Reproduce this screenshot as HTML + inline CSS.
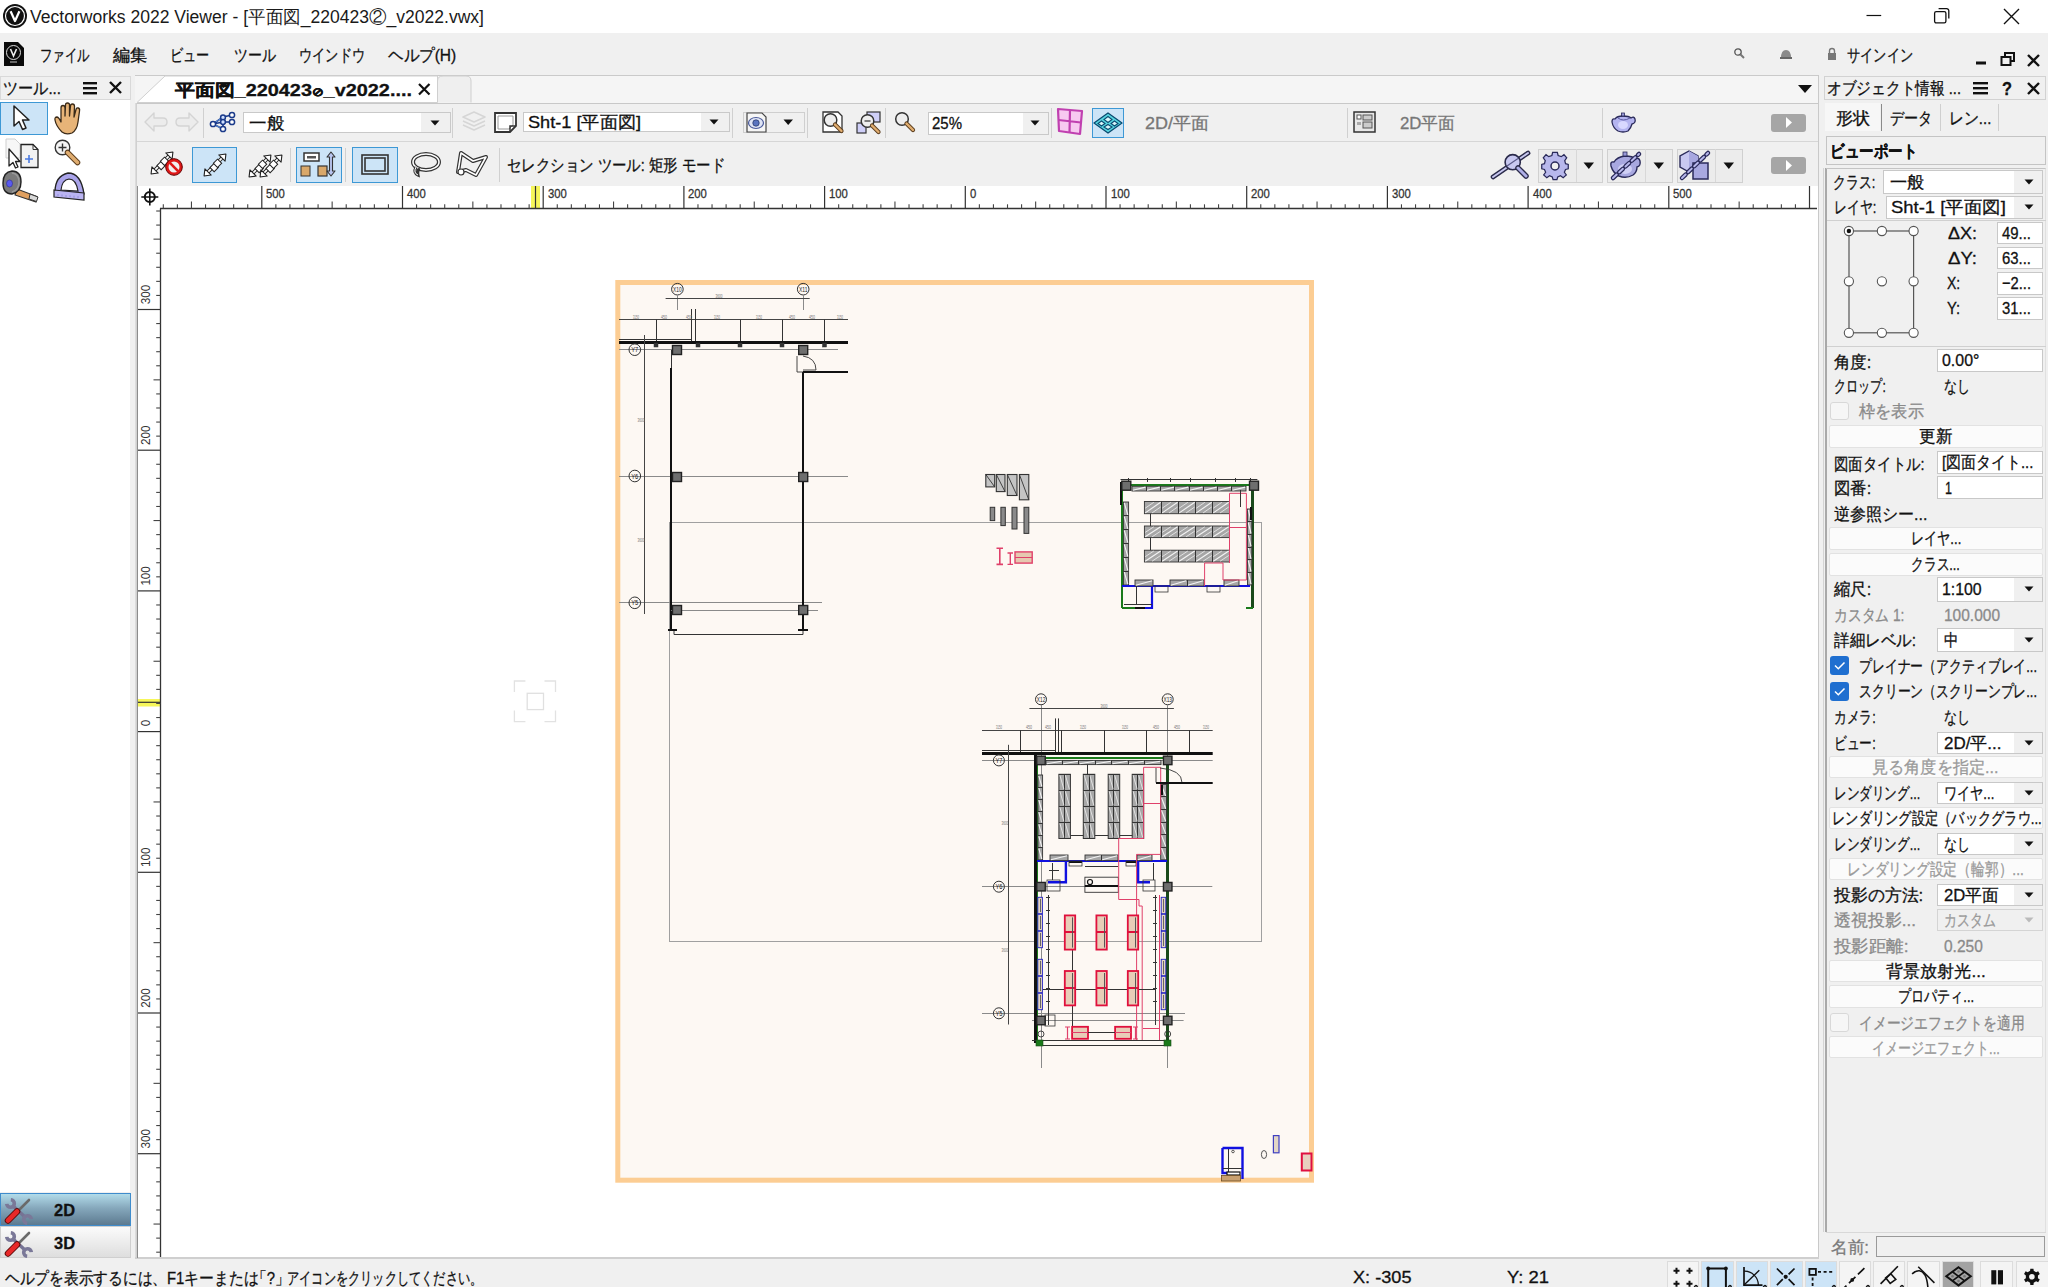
<!DOCTYPE html>
<html lang="ja"><head><meta charset="utf-8"><title>Vectorworks 2022 Viewer</title><style>*{margin:0;padding:0;box-sizing:border-box}
html,body{width:2048px;height:1287px;overflow:hidden;background:#f0f0f0;font-family:"Liberation Sans", sans-serif;position:relative}
.t{position:absolute;white-space:nowrap;line-height:1;transform-origin:0 50%;-webkit-text-stroke:0.3px currentColor}
svg{position:absolute;overflow:visible}
svg text{font-family:"Liberation Sans",sans-serif}</style></head><body>
<div style="position:absolute;left:0px;top:0px;width:2048px;height:33px;background:#fff"></div>
<svg style="left:2px;top:3px;" width="26" height="26" viewBox="0 0 26 26"><circle cx="13" cy="13" r="12" fill="#111"/><circle cx="13" cy="13" r="9.5" fill="none" stroke="#fff" stroke-width="1.2"/><path d="M8.6 8.2 L13 18 L17.4 8.2" fill="none" stroke="#fff" stroke-width="2.2" stroke-linejoin="round"/></svg>
<svg class="st" style="left:30px;top:-1.0px" width="458" height="36"><text x="0" y="24.24" font-size="18" font-weight="400" fill="#1a1a1a" textLength="454" lengthAdjust="spacingAndGlyphs">Vectorworks 2022 Viewer - [平面図_220423②_v2022.vwx]</text></svg>
<svg style="left:1866px;top:8px;" width="20" height="20" viewBox="0 0 20 20"><line x1="0.5" y1="7.5" x2="15.2" y2="7.5" stroke="#111" stroke-width="1.2"/></svg>
<svg style="left:1931px;top:5px;" width="22" height="22" viewBox="0 0 22 22"><rect x="3.6" y="6.6" width="11.3" height="11.3" rx="1.6" fill="none" stroke="#111" stroke-width="1.3"/><path d="M7.6 3.6 H15.6 a2.2 2.2 0 0 1 2.2 2.2 V13.6" fill="none" stroke="#111" stroke-width="1.3"/></svg>
<svg style="left:2001px;top:6px;" width="22" height="22" viewBox="0 0 22 22"><path d="M3 3 L18 18 M18 3 L3 18" stroke="#111" stroke-width="1.4"/></svg>
<div style="position:absolute;left:0px;top:33px;width:2048px;height:42px;background:#f0f0f0"></div>
<svg style="left:3px;top:41px;" width="22" height="26" viewBox="0 0 22 26"><path d="M1 1 H15 L21 7 V25 H1 Z" fill="#0a0a0a"/><circle cx="10.5" cy="11.5" r="7" fill="none" stroke="#ddd" stroke-width="1"/><path d="M7.5 8 L10.5 15 L13.5 8" fill="none" stroke="#eee" stroke-width="1.6"/><rect x="7" y="20" width="7" height="2" fill="#666"/></svg>
<svg class="st" style="left:39.5px;top:37.5px" width="54" height="34"><text x="0" y="22.89" font-size="17" font-weight="400" fill="#111" stroke="#111" stroke-width="0.3" textLength="49.5" lengthAdjust="spacingAndGlyphs">ファイル</text></svg>
<svg class="st" style="left:113px;top:37.5px" width="38" height="34"><text x="0" y="22.89" font-size="17" font-weight="400" fill="#111" stroke="#111" stroke-width="0.3" textLength="34.3" lengthAdjust="spacingAndGlyphs">編集</text></svg>
<svg class="st" style="left:170px;top:37.5px" width="44" height="34"><text x="0" y="22.89" font-size="17" font-weight="400" fill="#111" stroke="#111" stroke-width="0.3" textLength="39.5" lengthAdjust="spacingAndGlyphs">ビュー</text></svg>
<svg class="st" style="left:233.5px;top:37.5px" width="46" height="34"><text x="0" y="22.89" font-size="17" font-weight="400" fill="#111" stroke="#111" stroke-width="0.3" textLength="42" lengthAdjust="spacingAndGlyphs">ツール</text></svg>
<svg class="st" style="left:298.5px;top:37.5px" width="70" height="34"><text x="0" y="22.89" font-size="17" font-weight="400" fill="#111" stroke="#111" stroke-width="0.3" textLength="66" lengthAdjust="spacingAndGlyphs">ウインドウ</text></svg>
<svg class="st" style="left:387.5px;top:37.5px" width="72" height="34"><text x="0" y="22.89" font-size="17" font-weight="400" fill="#111" stroke="#111" stroke-width="0.3" textLength="68.3" lengthAdjust="spacingAndGlyphs">ヘルプ(H)</text></svg>
<svg style="left:1733px;top:47px;" width="14" height="14" viewBox="0 0 14 14"><circle cx="5" cy="5" r="3.2" fill="none" stroke="#555" stroke-width="1.3"/><line x1="7.3" y1="7.3" x2="11" y2="11" stroke="#777" stroke-width="2"/></svg>
<svg style="left:1779px;top:47px;" width="14" height="14" viewBox="0 0 14 14"><path d="M2 11 Q2 3 7 3 Q12 3 12 11 Z" fill="#8a8a8a"/><rect x="1" y="10" width="12" height="2" fill="#666"/></svg>
<svg style="left:1826px;top:47px;" width="12" height="14" viewBox="0 0 12 14"><rect x="2" y="6" width="8" height="7" fill="#777"/><path d="M3.5 6 V4 a2.5 2.5 0 0 1 5 0 V6" fill="none" stroke="#777" stroke-width="1.4"/></svg>
<svg class="st" style="left:1846.5px;top:37.5px" width="70" height="34"><text x="0" y="22.89" font-size="17" font-weight="400" fill="#111" stroke="#111" stroke-width="0.3" textLength="66" lengthAdjust="spacingAndGlyphs">サインイン</text></svg>
<svg style="left:1975px;top:57px;" width="14" height="10" viewBox="0 0 14 10"><rect x="1" y="4.5" width="10" height="3" fill="#111"/></svg>
<svg style="left:2000px;top:51px;" width="17" height="17" viewBox="0 0 17 17"><rect x="1.5" y="6" width="9" height="8" fill="none" stroke="#111" stroke-width="2"/><path d="M5 6 V2 H14 V10 H10.5" fill="none" stroke="#111" stroke-width="2"/></svg>
<svg style="left:2026px;top:53px;" width="16" height="16" viewBox="0 0 16 16"><path d="M2 2 L13 13 M13 2 L2 13" stroke="#111" stroke-width="2.4"/></svg>
<div style="position:absolute;left:0px;top:75px;width:137px;height:1183px;background:#f0f0f0"></div>
<div style="position:absolute;left:0px;top:76px;width:131px;height:24px;background:#f0f0f0;border:1px solid #d9d9d9"></div>
<svg class="st" style="left:3px;top:71.0px" width="62" height="34"><text x="0" y="22.89" font-size="17" font-weight="400" fill="#111" stroke="#111" stroke-width="0.3" textLength="58" lengthAdjust="spacingAndGlyphs">ツール...</text></svg>
<svg style="left:82px;top:80px;" width="18" height="16" viewBox="0 0 18 16"><rect x="1" y="2" width="14" height="2.4" fill="#111"/><rect x="1" y="7" width="14" height="2.4" fill="#111"/><rect x="1" y="12" width="14" height="2.4" fill="#111"/></svg>
<svg style="left:108px;top:80px;" width="16" height="16" viewBox="0 0 16 16"><path d="M2 2 L13 13 M13 2 L2 13" stroke="#111" stroke-width="2.4"/></svg>
<div style="position:absolute;left:0px;top:100px;width:130px;height:1092px;background:#fff"></div>
<div style="position:absolute;left:131px;top:75px;width:6px;height:1183px;background:#f0f0f0"></div>
<div style="position:absolute;left:135px;top:100px;width:1px;height:1158px;background:#dcdcdc"></div>
<div style="position:absolute;left:0px;top:102px;width:48px;height:33px;background:#cce4f7;border:1px solid #3d98d5"></div>
<svg style="left:10px;top:104px;" width="22" height="30" viewBox="0 0 22 30"><path d="M4 2 L4 22 L9 17.5 L12.5 25.5 L16 24 L12.5 16 L19 16 Z" fill="#fff" stroke="#222" stroke-width="1.5" stroke-linejoin="round"/></svg>
<svg style="left:53px;top:102px;" width="30" height="34" viewBox="0 0 30 34"><path d="M9 30 Q3 24 2 18 Q1.5 15 4 15 Q6 15.5 8 20 L8 6 Q8 3.5 10 3.5 Q12 3.5 12 6 L12 14 L12.5 3 Q12.5 1 14.5 1 Q16.5 1 16.5 3 L16.5 14 L17.5 4 Q17.5 2 19.5 2 Q21.5 2 21.5 4.5 L21 15 L23 7.5 Q23.5 5.5 25.3 6 Q27 6.5 26.5 9 L25 20 Q24 28 19 31 Q13 33 9 30 Z" fill="#e7b478" stroke="#3a2a18" stroke-width="1.3" stroke-linejoin="round"/></svg>
<svg style="left:2px;top:136px;" width="38" height="34" viewBox="0 0 38 34"><path d="M4 3 H13 L18 8 V22 H4 Z" fill="#f7f7f7" stroke="#cfcfcf" stroke-width="1"/><path d="M19 8.5 H31 L36 13.5 V31.5 H19 Z" fill="#f2f2f2" stroke="#222" stroke-width="1.3"/><path d="M31 8.5 V13.5 H36" fill="none" stroke="#222" stroke-width="0.9"/><path d="M27 19 V27 M23 23 H31" stroke="#4a7ae0" stroke-width="1.6"/><path d="M7 13 L7 30 L11 26.5 L13.5 32 L16 31 L13.5 25.5 L18 25.5 Z" fill="#fff" stroke="#222" stroke-width="1.3" stroke-linejoin="round"/></svg>
<svg style="left:52px;top:138px;" width="32" height="30" viewBox="0 0 32 30"><circle cx="10.5" cy="9.5" r="7.3" fill="#f4f4f4" stroke="#333" stroke-width="1.4"/><path d="M10.5 5.5 V13.5 M6.5 9.5 H14.5" stroke="#333" stroke-width="1.4"/><path d="M15.5 14.5 L25.5 24.5" stroke="#5a3c1c" stroke-width="5.5" stroke-linecap="round"/><path d="M15.5 14.5 L25.5 24.5" stroke="#e0ad70" stroke-width="3.5" stroke-linecap="round"/></svg>
<svg style="left:0px;top:168px;" width="42" height="34" viewBox="0 0 42 34"><path d="M17 21 L37 28.5 L36 34 L15 27 Z" fill="#e0a060" stroke="#333" stroke-width="1.1"/><path d="M30 26 L38 29 L36.5 33.5 L29 31 Z" fill="#d8d8d8" stroke="#333" stroke-width="1"/><path d="M3 15 Q3 4 12 3 Q21 3 21 14 Q21 24 12 26 Q3 26 3 15 Z" fill="#7a7a7a" stroke="#222" stroke-width="1.4"/><path d="M12 5 Q19 6 19 14 Q19 22 12 24" fill="none" stroke="#999" stroke-width="1.5"/><ellipse cx="9.5" cy="15.5" rx="3" ry="3.6" fill="#5a5af0" stroke="#2a2a90" stroke-width="0.6"/></svg>
<svg style="left:50px;top:170px;" width="38" height="34" viewBox="0 0 38 34"><path d="M5 22 Q5 6 18 3 Q31 3 34 24 Z" fill="#aaa4ea" stroke="#222" stroke-width="1.3" stroke-linejoin="round"/><path d="M11 20 Q12 10 19 9 Q26 9 28 21 Z" fill="#fff" stroke="#222" stroke-width="1.2"/><path d="M4 20 L34 23 L34 30 L4 27 Z" fill="#bab4f2" stroke="#222" stroke-width="1.2"/><path d="M8 24 V26 M12 24.5 V26.5 M16 25 V27 M20 25.3 V27.3 M24 25.7 V27.7 M28 26 V28" stroke="#8a84d0" stroke-width="0.8"/></svg>
<div style="position:absolute;left:0px;top:1193px;width:130.5px;height:33px;background:linear-gradient(#b2dcea,#86a8bc 45%,#5c7a90);border:1px solid #3f8ccc;border-width:1.5px"></div>
<div style="position:absolute;left:0px;top:1226px;width:130.5px;height:32px;background:linear-gradient(#fbfbfb,#dedede);border:1px solid #cfcfcf"></div>
<svg style="left:1px;top:1194px;" width="36" height="32" viewBox="0 0 36 32"><path d="M11.5 11.5 L24.5 23.5" stroke="#757394" stroke-width="3.4"/><path d="M9.83 5.71 A3.8 3.8 0 1 1 5.71 9.83" fill="none" stroke="#7a7898" stroke-width="3.6"/><path d="M26.17 29.29 A3.8 3.8 0 1 1 30.29 25.17" fill="none" stroke="#7a7898" stroke-width="3.6"/><path d="M28 6 L17 17" stroke="#6a6a6a" stroke-width="2.6" stroke-linecap="round"/><path d="M16 17.5 L7 26.5" stroke="#5a0a0a" stroke-width="6.5" stroke-linecap="round"/><path d="M16 17.5 L7 26.5" stroke="#e82828" stroke-width="4.6" stroke-linecap="round"/></svg>
<svg style="left:1px;top:1227px;" width="36" height="32" viewBox="0 0 36 32"><path d="M11.5 11.5 L24.5 23.5" stroke="#757394" stroke-width="3.4"/><path d="M9.83 5.71 A3.8 3.8 0 1 1 5.71 9.83" fill="none" stroke="#7a7898" stroke-width="3.6"/><path d="M26.17 29.29 A3.8 3.8 0 1 1 30.29 25.17" fill="none" stroke="#7a7898" stroke-width="3.6"/><path d="M28 6 L17 17" stroke="#6a6a6a" stroke-width="2.6" stroke-linecap="round"/><path d="M16 17.5 L7 26.5" stroke="#5a0a0a" stroke-width="6.5" stroke-linecap="round"/><path d="M16 17.5 L7 26.5" stroke="#e82828" stroke-width="4.6" stroke-linecap="round"/></svg>
<svg class="st" style="left:53.5px;top:1193.0px" width="25" height="34"><text x="0" y="22.89" font-size="17" font-weight="700" fill="#111" stroke="#111" stroke-width="0.3" textLength="21" lengthAdjust="spacingAndGlyphs">2D</text></svg>
<svg class="st" style="left:53.5px;top:1226.0px" width="25" height="34"><text x="0" y="22.89" font-size="17" font-weight="700" fill="#111" stroke="#111" stroke-width="0.3" textLength="21" lengthAdjust="spacingAndGlyphs">3D</text></svg>
<div style="position:absolute;left:0px;top:1258px;width:2048px;height:29px;background:#f0f0f0"></div>
<svg class="st" style="left:4.9px;top:1260.5px" width="166" height="34"><text x="0" y="22.89" font-size="17" font-weight="400" fill="#111" stroke="#111" stroke-width="0.3" textLength="162" lengthAdjust="spacingAndGlyphs">ヘルプを表示するには、</text></svg>
<svg class="st" style="left:166.7px;top:1260.5px" width="96" height="34"><text x="0" y="22.89" font-size="17" font-weight="400" fill="#111" stroke="#111" stroke-width="0.3" textLength="91.6" lengthAdjust="spacingAndGlyphs">F1キーまたは</text></svg>
<svg class="st" style="left:252px;top:1260.5px" width="42" height="34"><text x="0" y="22.89" font-size="17" font-weight="400" fill="#111" stroke="#111" stroke-width="0.3" textLength="38" lengthAdjust="spacingAndGlyphs">「?」</text></svg>
<svg class="st" style="left:287px;top:1260.5px" width="199" height="34"><text x="0" y="22.89" font-size="17" font-weight="400" fill="#111" stroke="#111" stroke-width="0.3" textLength="195.3" lengthAdjust="spacingAndGlyphs">アイコンをクリックしてください。</text></svg>
<svg class="st" style="left:1352.5px;top:1260.0px" width="62" height="34"><text x="0" y="22.89" font-size="17" font-weight="400" fill="#111" stroke="#111" stroke-width="0.3" textLength="58.5" lengthAdjust="spacingAndGlyphs">X: -305</text></svg>
<svg class="st" style="left:1507px;top:1260.0px" width="46" height="34"><text x="0" y="22.89" font-size="17" font-weight="400" fill="#111" stroke="#111" stroke-width="0.3" textLength="42" lengthAdjust="spacingAndGlyphs">Y: 21</text></svg>
<div style="position:absolute;left:1666.7px;top:1261px;width:32.5px;height:30px;background:#f4f4f4;border:1px solid #dcdcdc;border-bottom:none"></div>
<svg style="left:1666.7px;top:1261px;" width="33" height="30" viewBox="0 0 33 30"><path d="M6.5 9.8 H12.5 M9.5 6.8 V12.8 M19.5 9.8 H25.5 M22.5 6.8 V12.8 M6.5 22.8 H12.5 M9.5 19.8 V25.8 M19.5 22.8 H25.5 M22.5 19.8 V25.8" stroke="#111" stroke-width="2"/><path d="M26 30 Q27 25 29 24.5 Q31 24.5 30.5 30" fill="none" stroke="#111" stroke-width="1.3"/></svg>
<div style="position:absolute;left:1701px;top:1261px;width:32.5px;height:30px;background:#cce4f7;border:1px solid #dcdcdc;border-bottom:none"></div>
<svg style="left:1701px;top:1261px;" width="33" height="30" viewBox="0 0 33 30"><rect x="7.2" y="7.5" width="17.7" height="20" fill="none" stroke="#111" stroke-width="2"/><circle cx="7.2" cy="7.5" r="1.9" fill="#111"/><circle cx="24.9" cy="7.5" r="1.9" fill="#111"/><path d="M26 30 Q27 25 29 24.5 Q31 24.5 30.5 30" fill="none" stroke="#111" stroke-width="1.3"/></svg>
<div style="position:absolute;left:1735.5px;top:1261px;width:32.5px;height:30px;background:#cce4f7;border:1px solid #dcdcdc;border-bottom:none"></div>
<svg style="left:1735.5px;top:1261px;" width="33" height="30" viewBox="0 0 33 30"><path d="M8 6 V24.1 H26.5" fill="none" stroke="#111" stroke-width="1.7"/><path d="M8 24.1 L23.3 9.3" stroke="#111" stroke-width="1.4"/><path d="M8 10.2 A14 14 0 0 1 22.4 24.1" fill="none" stroke="#111" stroke-width="1.3"/><path d="M26 30 Q27 25 29 24.5 Q31 24.5 30.5 30" fill="none" stroke="#111" stroke-width="1.3"/></svg>
<div style="position:absolute;left:1770px;top:1261px;width:32.5px;height:30px;background:#cce4f7;border:1px solid #dcdcdc;border-bottom:none"></div>
<svg style="left:1770px;top:1261px;" width="33" height="30" viewBox="0 0 33 30"><path d="M6.9 7.5 L12.8 13.4 M18.6 13.4 L24.5 7.5 M12.8 18.2 L6.9 24.1 M18.6 18.2 L24.5 24.1" stroke="#111" stroke-width="1.7"/><circle cx="15.7" cy="15.8" r="2.1" fill="#111"/></svg>
<div style="position:absolute;left:1804.5px;top:1261px;width:32.5px;height:30px;background:#cce4f7;border:1px solid #dcdcdc;border-bottom:none"></div>
<svg style="left:1804.5px;top:1261px;" width="33" height="30" viewBox="0 0 33 30"><rect x="4.4" y="7.9" width="6.5" height="6" fill="none" stroke="#111" stroke-width="1.8"/><path d="M13 10.9 H28" stroke="#111" stroke-width="1.8" stroke-dasharray="3,2.6"/><path d="M7.6 16.5 V31" stroke="#111" stroke-width="1.8" stroke-dasharray="3,2.6"/><path d="M26 30 Q27 25 29 24.5 Q31 24.5 30.5 30" fill="none" stroke="#111" stroke-width="1.3"/></svg>
<div style="position:absolute;left:1838.5px;top:1261px;width:32.5px;height:30px;background:#f4f4f4;border:1px solid #dcdcdc;border-bottom:none"></div>
<svg style="left:1838.5px;top:1261px;" width="33" height="30" viewBox="0 0 33 30"><path d="M25.4 7.2 L4 28" stroke="#111" stroke-width="1.7" stroke-dasharray="9,3.5"/><circle cx="13.2" cy="18.9" r="1.9" fill="#111"/><path d="M26 30 Q27 25 29 24.5 Q31 24.5 30.5 30" fill="none" stroke="#111" stroke-width="1.3"/></svg>
<div style="position:absolute;left:1872.5px;top:1261px;width:32.5px;height:30px;background:#f4f4f4;border:1px solid #dcdcdc;border-bottom:none"></div>
<svg style="left:1872.5px;top:1261px;" width="33" height="30" viewBox="0 0 33 30"><path d="M24.9 5.2 L7.6 22.9" stroke="#111" stroke-width="1.6"/><path d="M12.7 16.8 L17.8 12.8 L22.8 18.4 L17.2 22.4 Z" fill="none" stroke="#111" stroke-width="1.6"/><path d="M26 30 Q27 25 29 24.5 Q31 24.5 30.5 30" fill="none" stroke="#111" stroke-width="1.3"/></svg>
<div style="position:absolute;left:1907px;top:1261px;width:32.5px;height:30px;background:#f4f4f4;border:1px solid #dcdcdc;border-bottom:none"></div>
<svg style="left:1907px;top:1261px;" width="33" height="30" viewBox="0 0 33 30"><path d="M5.1 12.8 Q13 6 18 14 Q20.5 19 21 28" fill="none" stroke="#111" stroke-width="1.6"/><path d="M11.2 5.7 L27.4 21.9" stroke="#111" stroke-width="1.5"/></svg>
<div style="position:absolute;left:1941.8px;top:1261px;width:32.5px;height:30px;background:#a3a3a3;border:1px solid #dcdcdc;border-bottom:none"></div>
<svg style="left:1941.8px;top:1261px;" width="33" height="30" viewBox="0 0 33 30"><path d="M16.5 6.2 L28.7 15.3 L16.5 24.4 L4.3 15.3 Z" fill="none" stroke="#111" stroke-width="2"/><path d="M10.4 10.75 L22.6 19.85 M22.6 10.75 L10.4 19.85" stroke="#111" stroke-width="1.6"/><circle cx="16.5" cy="10.5" r="1.3" fill="#777"/><circle cx="16.5" cy="20" r="1.3" fill="#777"/><circle cx="10.5" cy="15.3" r="1.3" fill="#777"/><circle cx="22.5" cy="15.3" r="1.3" fill="#777"/></svg>
<div style="position:absolute;left:1980px;top:1261px;width:32.5px;height:30px;background:#f4f4f4;border:1px solid #dcdcdc;border-bottom:none"></div>
<svg style="left:1980px;top:1261px;" width="33" height="30" viewBox="0 0 33 30"><rect x="11.3" y="9.2" width="5" height="14.2" fill="#111"/><rect x="17.9" y="9.2" width="5.1" height="14.2" fill="#111"/></svg>
<div style="position:absolute;left:2015.5px;top:1261px;width:33px;height:30px;background:#f4f4f4;border:1px solid #dcdcdc;border-bottom:none"></div>
<svg style="left:2015.5px;top:1261px;" width="33" height="30" viewBox="0 0 33 30"><path d="M14.09 9.87 L14.32 7.65 L17.48 7.65 L17.71 9.87 L20.13 11.27 L22.16 10.35 L23.75 13.10 L21.94 14.41 L21.94 17.19 L23.75 18.50 L22.16 21.25 L20.13 20.33 L17.71 21.73 L17.48 23.95 L14.32 23.95 L14.09 21.73 L11.67 20.33 L9.64 21.25 L8.05 18.50 L9.86 17.19 L9.86 14.41 L8.05 13.10 L9.64 10.35 L11.67 11.27 Z" fill="#111"/><circle cx="15.9" cy="15.8" r="2.8" fill="#f4f4f4"/></svg>
<div style="position:absolute;left:135px;top:75px;width:1684px;height:28px;background:#f5f5f5;border-top:1px solid #cacaca"></div>
<svg style="left:136px;top:75px;" width="303" height="28" viewBox="0 0 303 28"><path d="M1 27.5 L29 1 H301.5 V27.5 Z" fill="#fff" stroke="#d0d0d0" stroke-width="1"/></svg>
<svg class="st" style="left:174.5px;top:72.5px" width="241" height="34"><text x="0" y="22.89" font-size="17" font-weight="700" fill="#111" stroke="#111" stroke-width="0.3" textLength="237" lengthAdjust="spacingAndGlyphs">平面図_220423<tspan font-size="12">⊘</tspan>_v2022....</text></svg>
<svg style="left:417px;top:82px;" width="15" height="15" viewBox="0 0 15 15"><path d="M2 2 L12.5 12.5 M12.5 2 L2 12.5" stroke="#111" stroke-width="2.2"/></svg>
<svg style="left:437px;top:75px;" width="35" height="28" viewBox="0 0 35 28"><path d="M0.5 27.5 V6 Q0.5 1 6 1 H29 Q34 1 34 6 V27.5" fill="#efefef" stroke="#cfcfcf" stroke-width="1"/></svg>
<svg style="left:1797px;top:84px;" width="16" height="10" viewBox="0 0 16 10"><path d="M1 1 H15 L8 9 Z" fill="#111"/></svg>
<div style="position:absolute;left:1818px;top:75px;width:1px;height:1183px;background:#c9c9c9"></div>
<div style="position:absolute;left:137px;top:103px;width:1681px;height:38px;background:#f0f0f0;border-top:1px solid #c8c8c8"></div>
<div style="position:absolute;left:137px;top:141px;width:1681px;height:1px;background:#d6d6d6"></div>
<div style="position:absolute;left:137px;top:142px;width:1681px;height:44px;background:#f0f0f0"></div>
<div style="position:absolute;left:136px;top:103px;width:1px;height:1155px;background:#d0d0d0"></div>
<svg style="left:143px;top:111px;" width="26" height="22" viewBox="0 0 26 22"><path d="M2 11 L11 2 V7 H20 Q24 7 24 11 Q24 15 20 15 H11 V20 Z" fill="#ececec" stroke="#d4d4d4" stroke-width="1.4" stroke-linejoin="round"/></svg>
<svg style="left:174px;top:111px;" width="26" height="22" viewBox="0 0 26 22"><path d="M24 11 L15 2 V7 H6 Q2 7 2 11 Q2 15 6 15 H15 V20 Z" fill="#ececec" stroke="#d4d4d4" stroke-width="1.4" stroke-linejoin="round"/></svg>
<div style="position:absolute;left:203px;top:108px;width:1px;height:30px;background:#d0d0d0"></div>
<svg style="left:208px;top:110px;" width="28" height="24" viewBox="0 0 28 24"><path d="M5 14 L15 7 L24 5 M5 14 L15 12 L24 12 M5 14 L15 19 M15 7 L15 19 M15 12 L24 12" stroke="#1a3a8a" stroke-width="1.6" fill="none"/><path d="M5 14 L15 7 M5 14 L15 19" stroke="#6aa0e8" stroke-width="0.8"/><circle cx="5" cy="14" r="2.6" fill="#fff" stroke="#1a3a8a" stroke-width="1.5"/><circle cx="15" cy="7.5" r="2.4" fill="#cfe0ff" stroke="#1a3a8a" stroke-width="1.5"/><circle cx="24" cy="5" r="2.6" fill="#fff" stroke="#1a3a8a" stroke-width="1.5"/><circle cx="15" cy="12" r="2.4" fill="#cfe0ff" stroke="#1a3a8a" stroke-width="1.5"/><circle cx="24" cy="12" r="2.6" fill="#fff" stroke="#1a3a8a" stroke-width="1.5"/><circle cx="15" cy="19" r="2.6" fill="#fff" stroke="#1a3a8a" stroke-width="1.5"/></svg>
<div style="position:absolute;left:243px;top:112px;width:208px;height:21px;background:#fff;border:1px solid #c9c9c9"></div>
<div style="position:absolute;left:421px;top:113px;width:29px;height:19px;background:#f0f0f0"></div>
<svg style="left:429.8px;top:119.5px;" width="10" height="6" viewBox="0 0 10 6"><path d="M0.5 0.5 H9.5 L5 5.5 Z" fill="#111"/></svg>
<svg class="st" style="left:249px;top:105.5px" width="39" height="34"><text x="0" y="22.89" font-size="17" font-weight="400" fill="#111" stroke="#111" stroke-width="0.3" textLength="35" lengthAdjust="spacingAndGlyphs">一般</text></svg>
<div style="position:absolute;left:452px;top:108px;width:1px;height:30px;background:#d0d0d0"></div>
<svg style="left:460px;top:109px;" width="28" height="26" viewBox="0 0 28 26"><path d="M14 3 L25 8 L14 13 L3 8 Z M3 12 L14 17 L25 12 M3 16 L14 21 L25 16" fill="none" stroke="#d6d6d6" stroke-width="1.6" stroke-linejoin="round"/></svg>
<svg style="left:493px;top:110px;" width="26" height="24" viewBox="0 0 26 24"><path d="M2 3 H23 V16 L17 22 H2 Z" fill="#fff" stroke="#333" stroke-width="1.8"/><path d="M5 6 H20 V15 L16 19 H5 Z" fill="none" stroke="#999" stroke-width="1"/><path d="M17 22 V16 H23" fill="none" stroke="#333" stroke-width="1.5"/></svg>
<div style="position:absolute;left:523px;top:112px;width:207px;height:20px;background:#fff;border:1px solid #c9c9c9"></div>
<div style="position:absolute;left:701px;top:113px;width:28px;height:18px;background:#f0f0f0"></div>
<svg style="left:709px;top:119.0px;" width="10" height="6" viewBox="0 0 10 6"><path d="M0.5 0.5 H9.5 L5 5.5 Z" fill="#111"/></svg>
<svg class="st" style="left:528px;top:105.0px" width="117" height="34"><text x="0" y="22.89" font-size="17" font-weight="400" fill="#111" stroke="#111" stroke-width="0.3" textLength="113" lengthAdjust="spacingAndGlyphs">Sht-1 [平面図]</text></svg>
<div style="position:absolute;left:731.5px;top:108px;width:1px;height:30px;background:#d0d0d0"></div>
<div style="position:absolute;left:743px;top:112px;width:62px;height:21px;background:#f0f0f0;border:1px solid #cfcfcf"></div>
<svg style="left:744px;top:111px;" width="25" height="22" viewBox="0 0 25 22"><path d="M3 2 H18 L22 6 V21 H3 Z" fill="#f6f6f6" stroke="#444" stroke-width="1.2"/><ellipse cx="12" cy="12" rx="7.5" ry="5.5" fill="#dfe4f5" stroke="#4a5a9a" stroke-width="1.2"/><circle cx="12" cy="12" r="3.2" fill="#5a74c0" stroke="#2a3a70" stroke-width="0.8"/></svg>
<svg style="left:783px;top:119px;" width="11" height="7" viewBox="0 0 11 7"><path d="M0.5 0.5 H10 L5.2 6 Z" fill="#111"/></svg>
<div style="position:absolute;left:807px;top:108px;width:1px;height:30px;background:#d0d0d0"></div>
<svg style="left:820px;top:110px;" width="26" height="25" viewBox="0 0 26 25"><path d="M3 2 H18 L22 6 V22 H3 Z" fill="#fff" stroke="#333" stroke-width="1.3"/><circle cx="10.5" cy="10" r="6.3" fill="#eee" stroke="#333" stroke-width="1.5"/><path d="M15 14.5 L21.5 21" stroke="#5a3c1c" stroke-width="4.2" stroke-linecap="round"/><path d="M15 14.5 L21.5 21" stroke="#e0ad70" stroke-width="2.4" stroke-linecap="round"/></svg>
<svg style="left:855px;top:110px;" width="27" height="25" viewBox="0 0 27 25"><rect x="12" y="2" width="13" height="10" fill="#cfcff8" stroke="#333" stroke-width="1.2"/><rect x="2" y="13" width="9" height="10" fill="#cfcff8" stroke="#333" stroke-width="1.2"/><circle cx="12.5" cy="11" r="6.3" fill="#eee" stroke="#333" stroke-width="1.5"/><path d="M9.5 11 H15.5" stroke="#333" stroke-width="1.2"/><path d="M17 15.5 L23.5 22" stroke="#5a3c1c" stroke-width="4.2" stroke-linecap="round"/><path d="M17 15.5 L23.5 22" stroke="#e0ad70" stroke-width="2.4" stroke-linecap="round"/></svg>
<div style="position:absolute;left:884.8px;top:108px;width:1px;height:30px;background:#d0d0d0"></div>
<svg style="left:893px;top:110px;" width="24" height="24" viewBox="0 0 24 24"><circle cx="9" cy="9" r="6.3" fill="#eee" stroke="#333" stroke-width="1.5"/><path d="M13.5 13.5 L20 20" stroke="#5a3c1c" stroke-width="4.2" stroke-linecap="round"/><path d="M13.5 13.5 L20 20" stroke="#e0ad70" stroke-width="2.4" stroke-linecap="round"/></svg>
<div style="position:absolute;left:928px;top:112px;width:120.5px;height:22.5px;background:#fff;border:1px solid #c9c9c9"></div>
<div style="position:absolute;left:1023px;top:113px;width:24.5px;height:20.5px;background:#f0f0f0"></div>
<svg style="left:1030px;top:120.25px;" width="10" height="6" viewBox="0 0 10 6"><path d="M0.5 0.5 H9.5 L5 5.5 Z" fill="#111"/></svg>
<svg class="st" style="left:932px;top:106.2px" width="34" height="34"><text x="0" y="22.89" font-size="17" font-weight="400" fill="#111" stroke="#111" stroke-width="0.3" textLength="30" lengthAdjust="spacingAndGlyphs">25%</text></svg>
<div style="position:absolute;left:1050.5px;top:108px;width:1px;height:30px;background:#d0d0d0"></div>
<svg style="left:1055px;top:107px;" width="30" height="30" viewBox="0 0 30 30"><path d="M3 2 L27 4 L25 27 L4 24 Z" fill="#f7c9f0" stroke="#c040b0" stroke-width="2.2" stroke-linejoin="round"/><path d="M15 3 L14.5 25.5 M3.5 13 L26 15.5" stroke="#c040b0" stroke-width="2.2"/></svg>
<div style="position:absolute;left:1092px;top:108px;width:32px;height:30px;background:#cce4f7;border:1px solid #3d98d5"></div>
<svg style="left:1092px;top:108px;" width="32" height="30" viewBox="0 0 32 30"><path d="M16 5 L30 15 L16 25 L2 15 Z" fill="#58d6e0" stroke="#0a4a70" stroke-width="1.3" stroke-linejoin="round"/><path d="M16 8.5 L20 11.5 L16 14.5 L12 11.5 Z M22.5 13 L26 15.5 L22.5 18 L19 15.5 Z M9.5 13 L13 15.5 L9.5 18 L6 15.5 Z M16 16.5 L20 19 L16 21.5 L12 19 Z" fill="#d8f6fa" stroke="#0a4a70" stroke-width="1.1"/></svg>
<svg class="st" style="left:1144.5px;top:105.5px" width="68" height="34"><text x="0" y="22.89" font-size="17" font-weight="400" fill="#777" stroke="#777" stroke-width="0.3" textLength="64" lengthAdjust="spacingAndGlyphs">2D/平面</text></svg>
<div style="position:absolute;left:1346.5px;top:108px;width:1px;height:30px;background:#d0d0d0"></div>
<svg style="left:1352px;top:110px;" width="26" height="24" viewBox="0 0 26 24"><rect x="2" y="2" width="21" height="20" fill="#e8e8e8" stroke="#333" stroke-width="1.5"/><rect x="5" y="5" width="4" height="4" fill="#fff" stroke="#555" stroke-width="1"/><rect x="11" y="5" width="9" height="5" fill="#ccc" stroke="#555" stroke-width="1"/><rect x="11" y="12" width="9" height="6" fill="#ccc" stroke="#555" stroke-width="1"/><rect x="5" y="12" width="4" height="3" fill="#aaa"/></svg>
<svg class="st" style="left:1400px;top:105.5px" width="59" height="34"><text x="0" y="22.89" font-size="17" font-weight="400" fill="#777" stroke="#777" stroke-width="0.3" textLength="55" lengthAdjust="spacingAndGlyphs">2D平面</text></svg>
<div style="position:absolute;left:1601.5px;top:108px;width:1px;height:30px;background:#d0d0d0"></div>
<svg style="left:1609px;top:111px;" width="28" height="23" viewBox="0 0 28 23"><path d="M6 8 Q3 7 3 11 Q4 17 9 20 Q14 22 19 20 Q22 17 23 13 Q27 12 26 8 Q25 5 22 7 Q20 5 14 5 Q8 5 6 8 Z" fill="#b4b4f0" stroke="#2a2a5a" stroke-width="1.3"/><path d="M9 7 Q14 11 21 7" fill="none" stroke="#5a5aa0" stroke-width="1"/><ellipse cx="14" cy="14" rx="5" ry="4" fill="#d8d8ff"/><rect x="12.5" y="2" width="3" height="3" fill="#9a9ad8" stroke="#2a2a5a" stroke-width="0.8"/></svg>
<div style="position:absolute;left:1771px;top:113.5px;width:35px;height:18px;background:#a6a6a6;border-radius:3px"></div>
<svg style="left:1784px;top:116px;" width="10" height="13" viewBox="0 0 10 13"><path d="M2 1 L8 6.5 L2 12 Z" fill="#fff"/></svg>
<div style="position:absolute;left:1771px;top:156.5px;width:35px;height:17px;background:#a6a6a6;border-radius:3px"></div>
<svg style="left:1784px;top:158.5px;" width="10" height="13" viewBox="0 0 10 13"><path d="M2 1 L8 6.5 L2 12 Z" fill="#fff"/></svg>
<svg style="left:147px;top:146px;" width="38" height="38" viewBox="0 0 38 38"><g transform="translate(-3,-1)"><g transform="translate(18 18) scale(0.84) translate(-18 -18)"><path d="M8 28 L28 8" stroke="#222" stroke-width="4.4" stroke-linecap="square"/><path d="M8 28 L28 8" stroke="#fff" stroke-width="2.2"/><path d="M5 31 L6 22.5 L13.5 30 Z M31 5 L30 13.5 L22.5 6 Z" fill="#fff" stroke="#222" stroke-width="1.3" stroke-linejoin="round"/><rect x="13.5" y="17.5" width="7" height="7" transform="rotate(45 17 21)" fill="#fff" stroke="#222" stroke-width="1.2"/><rect x="17.5" y="12.5" width="7" height="7" transform="rotate(45 21 16)" fill="#fff" stroke="#222" stroke-width="1.2"/></g></g><circle cx="27" cy="21" r="8.3" fill="#e01818" stroke="#600" stroke-width="1"/><circle cx="27" cy="21" r="5.5" fill="#f0f0f0"/><path d="M22.7 16.7 L31.3 25.3" stroke="#e01818" stroke-width="2.6"/></svg>
<div style="position:absolute;left:192px;top:147px;width:45px;height:36px;background:#cce4f7;border:1px solid #3d98d5"></div>
<svg style="left:196px;top:147px;" width="38" height="36" viewBox="0 0 38 36"><g transform="translate(1,0)"><g transform="translate(18 18) scale(0.84) translate(-18 -18)"><path d="M8 28 L28 8" stroke="#222" stroke-width="4.4" stroke-linecap="square"/><path d="M8 28 L28 8" stroke="#fff" stroke-width="2.2"/><path d="M5 31 L6 22.5 L13.5 30 Z M31 5 L30 13.5 L22.5 6 Z" fill="#fff" stroke="#222" stroke-width="1.3" stroke-linejoin="round"/><rect x="13.5" y="17.5" width="7" height="7" transform="rotate(45 17 21)" fill="#fff" stroke="#222" stroke-width="1.2"/><rect x="17.5" y="12.5" width="7" height="7" transform="rotate(45 21 16)" fill="#fff" stroke="#222" stroke-width="1.2"/></g></g></svg>
<svg style="left:243px;top:146px;" width="42" height="38" viewBox="0 0 42 38"><g transform="translate(-1,2)"><g transform="translate(18 18) scale(0.84) translate(-18 -18)"><path d="M8 28 L28 8" stroke="#222" stroke-width="4.4" stroke-linecap="square"/><path d="M8 28 L28 8" stroke="#fff" stroke-width="2.2"/><path d="M5 31 L6 22.5 L13.5 30 Z M31 5 L30 13.5 L22.5 6 Z" fill="#fff" stroke="#222" stroke-width="1.3" stroke-linejoin="round"/><rect x="13.5" y="17.5" width="7" height="7" transform="rotate(45 17 21)" fill="#fff" stroke="#222" stroke-width="1.2"/><rect x="17.5" y="12.5" width="7" height="7" transform="rotate(45 21 16)" fill="#fff" stroke="#222" stroke-width="1.2"/></g></g><g transform="translate(10,2)"><g transform="translate(18 18) scale(0.84) translate(-18 -18)"><path d="M8 28 L28 8" stroke="#222" stroke-width="4.4" stroke-linecap="square"/><path d="M8 28 L28 8" stroke="#fff" stroke-width="2.2"/><path d="M5 31 L6 22.5 L13.5 30 Z M31 5 L30 13.5 L22.5 6 Z" fill="#fff" stroke="#222" stroke-width="1.3" stroke-linejoin="round"/><rect x="13.5" y="17.5" width="7" height="7" transform="rotate(45 17 21)" fill="#fff" stroke="#222" stroke-width="1.2"/><rect x="17.5" y="12.5" width="7" height="7" transform="rotate(45 21 16)" fill="#fff" stroke="#222" stroke-width="1.2"/></g></g></svg>
<div style="position:absolute;left:290px;top:148px;width:1px;height:34px;background:#d0d0d0"></div>
<div style="position:absolute;left:296px;top:147px;width:45.5px;height:36px;background:#cce4f7;border:1px solid #3d98d5"></div>
<svg style="left:296px;top:147px;" width="46" height="36" viewBox="0 0 46 36"><rect x="8" y="6" width="15" height="8" fill="#fff" stroke="#333" stroke-width="1.5"/><rect x="11" y="9" width="9" height="2.5" fill="#555"/><rect x="5" y="19" width="9" height="10" fill="#d9a86a" stroke="#333" stroke-width="1"/><rect x="22" y="19" width="9" height="10" fill="#d9a86a" stroke="#333" stroke-width="1.2"/><path d="M35 5 L31 10 H33.5 V24 H31 L35 29 L39 24 H36.5 V10 H39 Z" fill="#b8c4ee" stroke="#333" stroke-width="1.1" stroke-linejoin="round"/></svg>
<div style="position:absolute;left:345.4px;top:148px;width:1px;height:34px;background:#d0d0d0"></div>
<div style="position:absolute;left:352px;top:147px;width:45.5px;height:36px;background:#cce4f7;border:1px solid #3d98d5"></div>
<svg style="left:352px;top:147px;" width="46" height="36" viewBox="0 0 46 36"><rect x="10" y="8" width="26" height="19" fill="none" stroke="#333" stroke-width="1.6"/><rect x="13" y="11" width="20" height="13" fill="none" stroke="#333" stroke-width="1.6"/></svg>
<svg style="left:408px;top:148px;" width="36" height="34" viewBox="0 0 36 34"><ellipse cx="18" cy="14" rx="13" ry="8" fill="none" stroke="#333" stroke-width="4"/><ellipse cx="18" cy="14" rx="13" ry="8" fill="none" stroke="#fff" stroke-width="1.6"/><path d="M8 19 Q5 25 10 27 Q9 22 12 21" fill="none" stroke="#333" stroke-width="3"/><path d="M8 19 Q5 25 10 27" fill="none" stroke="#fff" stroke-width="1"/></svg>
<svg style="left:452px;top:148px;" width="38" height="34" viewBox="0 0 38 34"><path d="M6 24 L9 5 L21 13 L34 9 L24 27 L14 22 Z" fill="none" stroke="#333" stroke-width="4" stroke-linejoin="round"/><path d="M6 24 L9 5 L21 13 L34 9 L24 27 L14 22 Z" fill="none" stroke="#fff" stroke-width="1.6" stroke-linejoin="round"/><circle cx="9" cy="24" r="3" fill="#fff" stroke="#333" stroke-width="1.2"/></svg>
<div style="position:absolute;left:499px;top:148px;width:1px;height:34px;background:#d0d0d0"></div>
<svg class="st" style="left:506.5px;top:148.0px" width="222" height="34"><text x="0" y="22.89" font-size="17" font-weight="400" fill="#111" stroke="#111" stroke-width="0.3" textLength="218" lengthAdjust="spacingAndGlyphs">セレクション ツール: 矩形 モード</text></svg>
<svg style="left:1488px;top:149px;" width="44" height="34" viewBox="0 0 44 34"><path d="M5 28 L40 4" stroke="#2a2a4a" stroke-width="4.6" stroke-linecap="round"/><path d="M5 28 L40 4" stroke="#c8c8f0" stroke-width="2" stroke-linecap="round"/><circle cx="24.7" cy="13.2" r="7.6" fill="#c8c8f0" stroke="#2a2a4a" stroke-width="1.6"/><path d="M19 17 L30 9.5" stroke="#5a5a8a" stroke-width="1.2"/><path d="M30 19 L38 27" stroke="#2a2a4a" stroke-width="5.5" stroke-linecap="round"/><path d="M30 19 L38 27" stroke="#b0b0e8" stroke-width="3" stroke-linecap="round"/></svg>
<div style="position:absolute;left:1537.5px;top:148.5px;width:65.5px;height:34.5px;background:#ececec;border:1px solid #d0d0d0"></div>
<div style="position:absolute;left:1575.5px;top:149px;width:1px;height:33px;background:#d8d8d8"></div>
<svg style="left:1583.2px;top:162px;" width="12" height="8" viewBox="0 0 12 8"><path d="M0.5 0.5 H11 L5.8 7 Z" fill="#111"/></svg>
<div style="position:absolute;left:1607px;top:148.5px;width:65.5px;height:34.5px;background:#ececec;border:1px solid #d0d0d0"></div>
<div style="position:absolute;left:1645px;top:149px;width:1px;height:33px;background:#d8d8d8"></div>
<svg style="left:1652.7px;top:162px;" width="12" height="8" viewBox="0 0 12 8"><path d="M0.5 0.5 H11 L5.8 7 Z" fill="#111"/></svg>
<div style="position:absolute;left:1677px;top:148.5px;width:65.5px;height:34.5px;background:#ececec;border:1px solid #d0d0d0"></div>
<div style="position:absolute;left:1715px;top:149px;width:1px;height:33px;background:#d8d8d8"></div>
<svg style="left:1722.7px;top:162px;" width="12" height="8" viewBox="0 0 12 8"><path d="M0.5 0.5 H11 L5.8 7 Z" fill="#111"/></svg>
<svg style="left:1538px;top:148px;" width="36" height="36" viewBox="0 0 36 36"><g transform="translate(17,18)"><path d="M-3 -13 H3 L4 -9 L8 -7.5 L11.5 -10 L15 -6 L12.5 -2.5 L13.5 1.5 L17 2.5 V8 L13.5 9 L12 12.5 L14.5 16 L10.5 19.5 L7 17 L3.5 18.5 L2.5 22 H-2.5 L-3.5 18.5 L-7 17 L-10.5 19.5 L-14.5 16 L-12 12.5 L-13.5 9 L-17 8 V2.5 L-13.5 1.5 L-12.5 -2.5 L-15 -6 L-11.5 -10 L-8 -7.5 L-4 -9 Z" transform="scale(0.78) translate(0,-4.5)" fill="#b8b8ec" stroke="#2a2a5a" stroke-width="1.6"/><circle cx="0" cy="0" r="4" fill="#f0f0f0" stroke="#2a2a5a" stroke-width="1.5"/></g></svg>
<svg style="left:1607px;top:148px;" width="38" height="36" viewBox="0 0 38 36"><path d="M7 14 Q3 13 4 18 Q6 25 12 28 Q19 31 26 27 Q30 24 30 19 Q34 18 33 13 Q32 9 28 11 Q26 8 18 8 Q10 9 7 14 Z" fill="#a8a8e0" stroke="#2a2a5a" stroke-width="1.4"/><ellipse cx="18" cy="21" rx="7" ry="5" fill="#cfcff5"/><rect x="16" y="4" width="4" height="4" fill="#9a9ad8" stroke="#2a2a5a" stroke-width="0.8"/><path d="M6 30 L32 6" stroke="#2a2a5a" stroke-width="4.5" stroke-linecap="round" stroke-dasharray="5,3.5"/><path d="M6 30 L32 6" stroke="#b8b8ec" stroke-width="2" stroke-dasharray="5,3.5" stroke-linecap="round"/></svg>
<svg style="left:1677px;top:148px;" width="38" height="36" viewBox="0 0 38 36"><path d="M12 3 L21 8 V19 L12 24 L3 19 V8 Z" fill="#c8c8f0" stroke="#2a2a5a" stroke-width="1.4"/><path d="M12 3 L21 8 V19 L12 24 Z" fill="#a8a8e0"/><rect x="16" y="15" width="15" height="16" fill="#a8a8e0" stroke="#2a2a5a" stroke-width="1.5"/><path d="M5 30 L31 5" stroke="#2a2a5a" stroke-width="4.5" stroke-linecap="round" stroke-dasharray="5,3.5"/><path d="M5 30 L31 5" stroke="#b8b8ec" stroke-width="2" stroke-dasharray="5,3.5" stroke-linecap="round"/></svg>
<div style="position:absolute;left:137px;top:186px;width:1681px;height:1071px;background:#fff"></div>
<div style="position:absolute;left:135px;top:1257px;width:1684px;height:1.5px;background:#cfcfcf"></div>
<div style="position:absolute;left:137px;top:186px;width:1px;height:1072px;background:#8c8c8c"></div>
<svg style="left:0px;top:0px;pointer-events:none" width="2048" height="1287" viewBox="0 0 2048 1287"><rect x="138" y="699" width="22" height="7.5" fill="#f6f65a"/><line x1="138" y1="702.3" x2="160" y2="702.3" stroke="#333" stroke-width="1.2"/><rect x="531" y="186" width="9" height="22" fill="#f6f65a"/><line x1="535.5" y1="186" x2="535.5" y2="208" stroke="#333" stroke-width="1.2"/><line x1="160" y1="208.5" x2="1817" y2="208.5" stroke="#333" stroke-width="1.3"/><line x1="163.31" y1="204.3" x2="163.31" y2="208.5" stroke="#444" stroke-width="1.1"/><line x1="177.38" y1="204.3" x2="177.38" y2="208.5" stroke="#444" stroke-width="1.1"/><line x1="191.45" y1="201.5" x2="191.45" y2="208.5" stroke="#444" stroke-width="1.1"/><line x1="205.52" y1="204.3" x2="205.52" y2="208.5" stroke="#444" stroke-width="1.1"/><line x1="219.59" y1="204.3" x2="219.59" y2="208.5" stroke="#444" stroke-width="1.1"/><line x1="233.66" y1="204.3" x2="233.66" y2="208.5" stroke="#444" stroke-width="1.1"/><line x1="247.73" y1="204.3" x2="247.73" y2="208.5" stroke="#444" stroke-width="1.1"/><line x1="261.80" y1="186" x2="261.80" y2="208.5" stroke="#333" stroke-width="1.2"/><line x1="275.87" y1="204.3" x2="275.87" y2="208.5" stroke="#444" stroke-width="1.1"/><line x1="289.94" y1="204.3" x2="289.94" y2="208.5" stroke="#444" stroke-width="1.1"/><line x1="304.01" y1="204.3" x2="304.01" y2="208.5" stroke="#444" stroke-width="1.1"/><line x1="318.08" y1="204.3" x2="318.08" y2="208.5" stroke="#444" stroke-width="1.1"/><line x1="332.15" y1="201.5" x2="332.15" y2="208.5" stroke="#444" stroke-width="1.1"/><line x1="346.22" y1="204.3" x2="346.22" y2="208.5" stroke="#444" stroke-width="1.1"/><line x1="360.29" y1="204.3" x2="360.29" y2="208.5" stroke="#444" stroke-width="1.1"/><line x1="374.36" y1="204.3" x2="374.36" y2="208.5" stroke="#444" stroke-width="1.1"/><line x1="388.43" y1="204.3" x2="388.43" y2="208.5" stroke="#444" stroke-width="1.1"/><line x1="402.50" y1="186" x2="402.50" y2="208.5" stroke="#333" stroke-width="1.2"/><line x1="416.57" y1="204.3" x2="416.57" y2="208.5" stroke="#444" stroke-width="1.1"/><line x1="430.64" y1="204.3" x2="430.64" y2="208.5" stroke="#444" stroke-width="1.1"/><line x1="444.71" y1="204.3" x2="444.71" y2="208.5" stroke="#444" stroke-width="1.1"/><line x1="458.78" y1="204.3" x2="458.78" y2="208.5" stroke="#444" stroke-width="1.1"/><line x1="472.85" y1="201.5" x2="472.85" y2="208.5" stroke="#444" stroke-width="1.1"/><line x1="486.92" y1="204.3" x2="486.92" y2="208.5" stroke="#444" stroke-width="1.1"/><line x1="500.99" y1="204.3" x2="500.99" y2="208.5" stroke="#444" stroke-width="1.1"/><line x1="515.06" y1="204.3" x2="515.06" y2="208.5" stroke="#444" stroke-width="1.1"/><line x1="529.13" y1="204.3" x2="529.13" y2="208.5" stroke="#444" stroke-width="1.1"/><line x1="543.20" y1="186" x2="543.20" y2="208.5" stroke="#333" stroke-width="1.2"/><line x1="557.27" y1="204.3" x2="557.27" y2="208.5" stroke="#444" stroke-width="1.1"/><line x1="571.34" y1="204.3" x2="571.34" y2="208.5" stroke="#444" stroke-width="1.1"/><line x1="585.41" y1="204.3" x2="585.41" y2="208.5" stroke="#444" stroke-width="1.1"/><line x1="599.48" y1="204.3" x2="599.48" y2="208.5" stroke="#444" stroke-width="1.1"/><line x1="613.55" y1="201.5" x2="613.55" y2="208.5" stroke="#444" stroke-width="1.1"/><line x1="627.62" y1="204.3" x2="627.62" y2="208.5" stroke="#444" stroke-width="1.1"/><line x1="641.69" y1="204.3" x2="641.69" y2="208.5" stroke="#444" stroke-width="1.1"/><line x1="655.76" y1="204.3" x2="655.76" y2="208.5" stroke="#444" stroke-width="1.1"/><line x1="669.83" y1="204.3" x2="669.83" y2="208.5" stroke="#444" stroke-width="1.1"/><line x1="683.90" y1="186" x2="683.90" y2="208.5" stroke="#333" stroke-width="1.2"/><line x1="697.97" y1="204.3" x2="697.97" y2="208.5" stroke="#444" stroke-width="1.1"/><line x1="712.04" y1="204.3" x2="712.04" y2="208.5" stroke="#444" stroke-width="1.1"/><line x1="726.11" y1="204.3" x2="726.11" y2="208.5" stroke="#444" stroke-width="1.1"/><line x1="740.18" y1="204.3" x2="740.18" y2="208.5" stroke="#444" stroke-width="1.1"/><line x1="754.25" y1="201.5" x2="754.25" y2="208.5" stroke="#444" stroke-width="1.1"/><line x1="768.32" y1="204.3" x2="768.32" y2="208.5" stroke="#444" stroke-width="1.1"/><line x1="782.39" y1="204.3" x2="782.39" y2="208.5" stroke="#444" stroke-width="1.1"/><line x1="796.46" y1="204.3" x2="796.46" y2="208.5" stroke="#444" stroke-width="1.1"/><line x1="810.53" y1="204.3" x2="810.53" y2="208.5" stroke="#444" stroke-width="1.1"/><line x1="824.60" y1="186" x2="824.60" y2="208.5" stroke="#333" stroke-width="1.2"/><line x1="838.67" y1="204.3" x2="838.67" y2="208.5" stroke="#444" stroke-width="1.1"/><line x1="852.74" y1="204.3" x2="852.74" y2="208.5" stroke="#444" stroke-width="1.1"/><line x1="866.81" y1="204.3" x2="866.81" y2="208.5" stroke="#444" stroke-width="1.1"/><line x1="880.88" y1="204.3" x2="880.88" y2="208.5" stroke="#444" stroke-width="1.1"/><line x1="894.95" y1="201.5" x2="894.95" y2="208.5" stroke="#444" stroke-width="1.1"/><line x1="909.02" y1="204.3" x2="909.02" y2="208.5" stroke="#444" stroke-width="1.1"/><line x1="923.09" y1="204.3" x2="923.09" y2="208.5" stroke="#444" stroke-width="1.1"/><line x1="937.16" y1="204.3" x2="937.16" y2="208.5" stroke="#444" stroke-width="1.1"/><line x1="951.23" y1="204.3" x2="951.23" y2="208.5" stroke="#444" stroke-width="1.1"/><line x1="965.30" y1="186" x2="965.30" y2="208.5" stroke="#333" stroke-width="1.2"/><line x1="979.37" y1="204.3" x2="979.37" y2="208.5" stroke="#444" stroke-width="1.1"/><line x1="993.44" y1="204.3" x2="993.44" y2="208.5" stroke="#444" stroke-width="1.1"/><line x1="1007.51" y1="204.3" x2="1007.51" y2="208.5" stroke="#444" stroke-width="1.1"/><line x1="1021.58" y1="204.3" x2="1021.58" y2="208.5" stroke="#444" stroke-width="1.1"/><line x1="1035.65" y1="201.5" x2="1035.65" y2="208.5" stroke="#444" stroke-width="1.1"/><line x1="1049.72" y1="204.3" x2="1049.72" y2="208.5" stroke="#444" stroke-width="1.1"/><line x1="1063.79" y1="204.3" x2="1063.79" y2="208.5" stroke="#444" stroke-width="1.1"/><line x1="1077.86" y1="204.3" x2="1077.86" y2="208.5" stroke="#444" stroke-width="1.1"/><line x1="1091.93" y1="204.3" x2="1091.93" y2="208.5" stroke="#444" stroke-width="1.1"/><line x1="1106.00" y1="186" x2="1106.00" y2="208.5" stroke="#333" stroke-width="1.2"/><line x1="1120.07" y1="204.3" x2="1120.07" y2="208.5" stroke="#444" stroke-width="1.1"/><line x1="1134.14" y1="204.3" x2="1134.14" y2="208.5" stroke="#444" stroke-width="1.1"/><line x1="1148.21" y1="204.3" x2="1148.21" y2="208.5" stroke="#444" stroke-width="1.1"/><line x1="1162.28" y1="204.3" x2="1162.28" y2="208.5" stroke="#444" stroke-width="1.1"/><line x1="1176.35" y1="201.5" x2="1176.35" y2="208.5" stroke="#444" stroke-width="1.1"/><line x1="1190.42" y1="204.3" x2="1190.42" y2="208.5" stroke="#444" stroke-width="1.1"/><line x1="1204.49" y1="204.3" x2="1204.49" y2="208.5" stroke="#444" stroke-width="1.1"/><line x1="1218.56" y1="204.3" x2="1218.56" y2="208.5" stroke="#444" stroke-width="1.1"/><line x1="1232.63" y1="204.3" x2="1232.63" y2="208.5" stroke="#444" stroke-width="1.1"/><line x1="1246.70" y1="186" x2="1246.70" y2="208.5" stroke="#333" stroke-width="1.2"/><line x1="1260.77" y1="204.3" x2="1260.77" y2="208.5" stroke="#444" stroke-width="1.1"/><line x1="1274.84" y1="204.3" x2="1274.84" y2="208.5" stroke="#444" stroke-width="1.1"/><line x1="1288.91" y1="204.3" x2="1288.91" y2="208.5" stroke="#444" stroke-width="1.1"/><line x1="1302.98" y1="204.3" x2="1302.98" y2="208.5" stroke="#444" stroke-width="1.1"/><line x1="1317.05" y1="201.5" x2="1317.05" y2="208.5" stroke="#444" stroke-width="1.1"/><line x1="1331.12" y1="204.3" x2="1331.12" y2="208.5" stroke="#444" stroke-width="1.1"/><line x1="1345.19" y1="204.3" x2="1345.19" y2="208.5" stroke="#444" stroke-width="1.1"/><line x1="1359.26" y1="204.3" x2="1359.26" y2="208.5" stroke="#444" stroke-width="1.1"/><line x1="1373.33" y1="204.3" x2="1373.33" y2="208.5" stroke="#444" stroke-width="1.1"/><line x1="1387.40" y1="186" x2="1387.40" y2="208.5" stroke="#333" stroke-width="1.2"/><line x1="1401.47" y1="204.3" x2="1401.47" y2="208.5" stroke="#444" stroke-width="1.1"/><line x1="1415.54" y1="204.3" x2="1415.54" y2="208.5" stroke="#444" stroke-width="1.1"/><line x1="1429.61" y1="204.3" x2="1429.61" y2="208.5" stroke="#444" stroke-width="1.1"/><line x1="1443.68" y1="204.3" x2="1443.68" y2="208.5" stroke="#444" stroke-width="1.1"/><line x1="1457.75" y1="201.5" x2="1457.75" y2="208.5" stroke="#444" stroke-width="1.1"/><line x1="1471.82" y1="204.3" x2="1471.82" y2="208.5" stroke="#444" stroke-width="1.1"/><line x1="1485.89" y1="204.3" x2="1485.89" y2="208.5" stroke="#444" stroke-width="1.1"/><line x1="1499.96" y1="204.3" x2="1499.96" y2="208.5" stroke="#444" stroke-width="1.1"/><line x1="1514.03" y1="204.3" x2="1514.03" y2="208.5" stroke="#444" stroke-width="1.1"/><line x1="1528.10" y1="186" x2="1528.10" y2="208.5" stroke="#333" stroke-width="1.2"/><line x1="1542.17" y1="204.3" x2="1542.17" y2="208.5" stroke="#444" stroke-width="1.1"/><line x1="1556.24" y1="204.3" x2="1556.24" y2="208.5" stroke="#444" stroke-width="1.1"/><line x1="1570.31" y1="204.3" x2="1570.31" y2="208.5" stroke="#444" stroke-width="1.1"/><line x1="1584.38" y1="204.3" x2="1584.38" y2="208.5" stroke="#444" stroke-width="1.1"/><line x1="1598.45" y1="201.5" x2="1598.45" y2="208.5" stroke="#444" stroke-width="1.1"/><line x1="1612.52" y1="204.3" x2="1612.52" y2="208.5" stroke="#444" stroke-width="1.1"/><line x1="1626.59" y1="204.3" x2="1626.59" y2="208.5" stroke="#444" stroke-width="1.1"/><line x1="1640.66" y1="204.3" x2="1640.66" y2="208.5" stroke="#444" stroke-width="1.1"/><line x1="1654.73" y1="204.3" x2="1654.73" y2="208.5" stroke="#444" stroke-width="1.1"/><line x1="1668.80" y1="186" x2="1668.80" y2="208.5" stroke="#333" stroke-width="1.2"/><line x1="1682.87" y1="204.3" x2="1682.87" y2="208.5" stroke="#444" stroke-width="1.1"/><line x1="1696.94" y1="204.3" x2="1696.94" y2="208.5" stroke="#444" stroke-width="1.1"/><line x1="1711.01" y1="204.3" x2="1711.01" y2="208.5" stroke="#444" stroke-width="1.1"/><line x1="1725.08" y1="204.3" x2="1725.08" y2="208.5" stroke="#444" stroke-width="1.1"/><line x1="1739.15" y1="201.5" x2="1739.15" y2="208.5" stroke="#444" stroke-width="1.1"/><line x1="1753.22" y1="204.3" x2="1753.22" y2="208.5" stroke="#444" stroke-width="1.1"/><line x1="1767.29" y1="204.3" x2="1767.29" y2="208.5" stroke="#444" stroke-width="1.1"/><line x1="1781.36" y1="204.3" x2="1781.36" y2="208.5" stroke="#444" stroke-width="1.1"/><line x1="1795.43" y1="204.3" x2="1795.43" y2="208.5" stroke="#444" stroke-width="1.1"/><line x1="1809.50" y1="186" x2="1809.50" y2="208.5" stroke="#333" stroke-width="1.2"/><line x1="160.5" y1="208.5" x2="160.5" y2="1257" stroke="#333" stroke-width="1.3"/><line x1="156.2" y1="211.01" x2="160.5" y2="211.01" stroke="#444" stroke-width="1.1"/><line x1="156.2" y1="225.08" x2="160.5" y2="225.08" stroke="#444" stroke-width="1.1"/><line x1="153.5" y1="239.15" x2="160.5" y2="239.15" stroke="#444" stroke-width="1.1"/><line x1="156.2" y1="253.22" x2="160.5" y2="253.22" stroke="#444" stroke-width="1.1"/><line x1="156.2" y1="267.29" x2="160.5" y2="267.29" stroke="#444" stroke-width="1.1"/><line x1="156.2" y1="281.36" x2="160.5" y2="281.36" stroke="#444" stroke-width="1.1"/><line x1="156.2" y1="295.43" x2="160.5" y2="295.43" stroke="#444" stroke-width="1.1"/><line x1="138" y1="309.50" x2="160.5" y2="309.50" stroke="#333" stroke-width="1.2"/><line x1="156.2" y1="323.57" x2="160.5" y2="323.57" stroke="#444" stroke-width="1.1"/><line x1="156.2" y1="337.64" x2="160.5" y2="337.64" stroke="#444" stroke-width="1.1"/><line x1="156.2" y1="351.71" x2="160.5" y2="351.71" stroke="#444" stroke-width="1.1"/><line x1="156.2" y1="365.78" x2="160.5" y2="365.78" stroke="#444" stroke-width="1.1"/><line x1="153.5" y1="379.85" x2="160.5" y2="379.85" stroke="#444" stroke-width="1.1"/><line x1="156.2" y1="393.92" x2="160.5" y2="393.92" stroke="#444" stroke-width="1.1"/><line x1="156.2" y1="407.99" x2="160.5" y2="407.99" stroke="#444" stroke-width="1.1"/><line x1="156.2" y1="422.06" x2="160.5" y2="422.06" stroke="#444" stroke-width="1.1"/><line x1="156.2" y1="436.13" x2="160.5" y2="436.13" stroke="#444" stroke-width="1.1"/><line x1="138" y1="450.20" x2="160.5" y2="450.20" stroke="#333" stroke-width="1.2"/><line x1="156.2" y1="464.27" x2="160.5" y2="464.27" stroke="#444" stroke-width="1.1"/><line x1="156.2" y1="478.34" x2="160.5" y2="478.34" stroke="#444" stroke-width="1.1"/><line x1="156.2" y1="492.41" x2="160.5" y2="492.41" stroke="#444" stroke-width="1.1"/><line x1="156.2" y1="506.48" x2="160.5" y2="506.48" stroke="#444" stroke-width="1.1"/><line x1="153.5" y1="520.55" x2="160.5" y2="520.55" stroke="#444" stroke-width="1.1"/><line x1="156.2" y1="534.62" x2="160.5" y2="534.62" stroke="#444" stroke-width="1.1"/><line x1="156.2" y1="548.69" x2="160.5" y2="548.69" stroke="#444" stroke-width="1.1"/><line x1="156.2" y1="562.76" x2="160.5" y2="562.76" stroke="#444" stroke-width="1.1"/><line x1="156.2" y1="576.83" x2="160.5" y2="576.83" stroke="#444" stroke-width="1.1"/><line x1="138" y1="590.90" x2="160.5" y2="590.90" stroke="#333" stroke-width="1.2"/><line x1="156.2" y1="604.97" x2="160.5" y2="604.97" stroke="#444" stroke-width="1.1"/><line x1="156.2" y1="619.04" x2="160.5" y2="619.04" stroke="#444" stroke-width="1.1"/><line x1="156.2" y1="633.11" x2="160.5" y2="633.11" stroke="#444" stroke-width="1.1"/><line x1="156.2" y1="647.18" x2="160.5" y2="647.18" stroke="#444" stroke-width="1.1"/><line x1="153.5" y1="661.25" x2="160.5" y2="661.25" stroke="#444" stroke-width="1.1"/><line x1="156.2" y1="675.32" x2="160.5" y2="675.32" stroke="#444" stroke-width="1.1"/><line x1="156.2" y1="689.39" x2="160.5" y2="689.39" stroke="#444" stroke-width="1.1"/><line x1="156.2" y1="703.46" x2="160.5" y2="703.46" stroke="#444" stroke-width="1.1"/><line x1="156.2" y1="717.53" x2="160.5" y2="717.53" stroke="#444" stroke-width="1.1"/><line x1="138" y1="731.60" x2="160.5" y2="731.60" stroke="#333" stroke-width="1.2"/><line x1="156.2" y1="745.67" x2="160.5" y2="745.67" stroke="#444" stroke-width="1.1"/><line x1="156.2" y1="759.74" x2="160.5" y2="759.74" stroke="#444" stroke-width="1.1"/><line x1="156.2" y1="773.81" x2="160.5" y2="773.81" stroke="#444" stroke-width="1.1"/><line x1="156.2" y1="787.88" x2="160.5" y2="787.88" stroke="#444" stroke-width="1.1"/><line x1="153.5" y1="801.95" x2="160.5" y2="801.95" stroke="#444" stroke-width="1.1"/><line x1="156.2" y1="816.02" x2="160.5" y2="816.02" stroke="#444" stroke-width="1.1"/><line x1="156.2" y1="830.09" x2="160.5" y2="830.09" stroke="#444" stroke-width="1.1"/><line x1="156.2" y1="844.16" x2="160.5" y2="844.16" stroke="#444" stroke-width="1.1"/><line x1="156.2" y1="858.23" x2="160.5" y2="858.23" stroke="#444" stroke-width="1.1"/><line x1="138" y1="872.30" x2="160.5" y2="872.30" stroke="#333" stroke-width="1.2"/><line x1="156.2" y1="886.37" x2="160.5" y2="886.37" stroke="#444" stroke-width="1.1"/><line x1="156.2" y1="900.44" x2="160.5" y2="900.44" stroke="#444" stroke-width="1.1"/><line x1="156.2" y1="914.51" x2="160.5" y2="914.51" stroke="#444" stroke-width="1.1"/><line x1="156.2" y1="928.58" x2="160.5" y2="928.58" stroke="#444" stroke-width="1.1"/><line x1="153.5" y1="942.65" x2="160.5" y2="942.65" stroke="#444" stroke-width="1.1"/><line x1="156.2" y1="956.72" x2="160.5" y2="956.72" stroke="#444" stroke-width="1.1"/><line x1="156.2" y1="970.79" x2="160.5" y2="970.79" stroke="#444" stroke-width="1.1"/><line x1="156.2" y1="984.86" x2="160.5" y2="984.86" stroke="#444" stroke-width="1.1"/><line x1="156.2" y1="998.93" x2="160.5" y2="998.93" stroke="#444" stroke-width="1.1"/><line x1="138" y1="1013.00" x2="160.5" y2="1013.00" stroke="#333" stroke-width="1.2"/><line x1="156.2" y1="1027.07" x2="160.5" y2="1027.07" stroke="#444" stroke-width="1.1"/><line x1="156.2" y1="1041.14" x2="160.5" y2="1041.14" stroke="#444" stroke-width="1.1"/><line x1="156.2" y1="1055.21" x2="160.5" y2="1055.21" stroke="#444" stroke-width="1.1"/><line x1="156.2" y1="1069.28" x2="160.5" y2="1069.28" stroke="#444" stroke-width="1.1"/><line x1="153.5" y1="1083.35" x2="160.5" y2="1083.35" stroke="#444" stroke-width="1.1"/><line x1="156.2" y1="1097.42" x2="160.5" y2="1097.42" stroke="#444" stroke-width="1.1"/><line x1="156.2" y1="1111.49" x2="160.5" y2="1111.49" stroke="#444" stroke-width="1.1"/><line x1="156.2" y1="1125.56" x2="160.5" y2="1125.56" stroke="#444" stroke-width="1.1"/><line x1="156.2" y1="1139.63" x2="160.5" y2="1139.63" stroke="#444" stroke-width="1.1"/><line x1="138" y1="1153.70" x2="160.5" y2="1153.70" stroke="#333" stroke-width="1.2"/><line x1="156.2" y1="1167.77" x2="160.5" y2="1167.77" stroke="#444" stroke-width="1.1"/><line x1="156.2" y1="1181.84" x2="160.5" y2="1181.84" stroke="#444" stroke-width="1.1"/><line x1="156.2" y1="1195.91" x2="160.5" y2="1195.91" stroke="#444" stroke-width="1.1"/><line x1="156.2" y1="1209.98" x2="160.5" y2="1209.98" stroke="#444" stroke-width="1.1"/><line x1="153.5" y1="1224.05" x2="160.5" y2="1224.05" stroke="#444" stroke-width="1.1"/><line x1="156.2" y1="1238.12" x2="160.5" y2="1238.12" stroke="#444" stroke-width="1.1"/><line x1="156.2" y1="1252.19" x2="160.5" y2="1252.19" stroke="#444" stroke-width="1.1"/><circle cx="149.8" cy="197" r="5" fill="none" stroke="#111" stroke-width="2"/><path d="M149.8 188.5 V205.5 M141.3 197 H158.3" stroke="#111" stroke-width="1.6"/></svg>
<svg class="st" style="left:266.29999999999995px;top:180.3px" width="23" height="26"><text x="0" y="17.50" font-size="13" font-weight="400" fill="#333" stroke="#333" stroke-width="0.3" textLength="18.9" lengthAdjust="spacingAndGlyphs">500</text></svg>
<svg class="st" style="left:407.0px;top:180.3px" width="23" height="26"><text x="0" y="17.50" font-size="13" font-weight="400" fill="#333" stroke="#333" stroke-width="0.3" textLength="18.9" lengthAdjust="spacingAndGlyphs">400</text></svg>
<svg class="st" style="left:547.7px;top:180.3px" width="23" height="26"><text x="0" y="17.50" font-size="13" font-weight="400" fill="#333" stroke="#333" stroke-width="0.3" textLength="18.9" lengthAdjust="spacingAndGlyphs">300</text></svg>
<svg class="st" style="left:688.4px;top:180.3px" width="23" height="26"><text x="0" y="17.50" font-size="13" font-weight="400" fill="#333" stroke="#333" stroke-width="0.3" textLength="18.9" lengthAdjust="spacingAndGlyphs">200</text></svg>
<svg class="st" style="left:829.0999999999999px;top:180.3px" width="23" height="26"><text x="0" y="17.50" font-size="13" font-weight="400" fill="#333" stroke="#333" stroke-width="0.3" textLength="18.9" lengthAdjust="spacingAndGlyphs">100</text></svg>
<svg class="st" style="left:969.8px;top:180.3px" width="10" height="26"><text x="0" y="17.50" font-size="13" font-weight="400" fill="#333" stroke="#333" stroke-width="0.3" textLength="6.3" lengthAdjust="spacingAndGlyphs">0</text></svg>
<svg class="st" style="left:1110.5px;top:180.3px" width="23" height="26"><text x="0" y="17.50" font-size="13" font-weight="400" fill="#333" stroke="#333" stroke-width="0.3" textLength="18.9" lengthAdjust="spacingAndGlyphs">100</text></svg>
<svg class="st" style="left:1251.1999999999998px;top:180.3px" width="23" height="26"><text x="0" y="17.50" font-size="13" font-weight="400" fill="#333" stroke="#333" stroke-width="0.3" textLength="18.9" lengthAdjust="spacingAndGlyphs">200</text></svg>
<svg class="st" style="left:1391.8999999999999px;top:180.3px" width="23" height="26"><text x="0" y="17.50" font-size="13" font-weight="400" fill="#333" stroke="#333" stroke-width="0.3" textLength="18.9" lengthAdjust="spacingAndGlyphs">300</text></svg>
<svg class="st" style="left:1532.6px;top:180.3px" width="23" height="26"><text x="0" y="17.50" font-size="13" font-weight="400" fill="#333" stroke="#333" stroke-width="0.3" textLength="18.9" lengthAdjust="spacingAndGlyphs">400</text></svg>
<svg class="st" style="left:1673.3px;top:180.3px" width="23" height="26"><text x="0" y="17.50" font-size="13" font-weight="400" fill="#333" stroke="#333" stroke-width="0.3" textLength="18.9" lengthAdjust="spacingAndGlyphs">500</text></svg>
<svg style="left:0px;top:0px;" width="2048" height="1287" viewBox="0 0 2048 1287"><text transform="translate(150.2,1148.4) rotate(-90)" font-size="13" font-family="Liberation Sans" fill="#333" textLength="19.4" lengthAdjust="spacingAndGlyphs">300</text><text transform="translate(150.2,1007.7) rotate(-90)" font-size="13" font-family="Liberation Sans" fill="#333" textLength="19.4" lengthAdjust="spacingAndGlyphs">200</text><text transform="translate(150.2,867.0) rotate(-90)" font-size="13" font-family="Liberation Sans" fill="#333" textLength="19.4" lengthAdjust="spacingAndGlyphs">100</text><text transform="translate(150.2,726.3) rotate(-90)" font-size="13" font-family="Liberation Sans" fill="#333" textLength="6.5" lengthAdjust="spacingAndGlyphs">0</text><text transform="translate(150.2,585.6) rotate(-90)" font-size="13" font-family="Liberation Sans" fill="#333" textLength="19.4" lengthAdjust="spacingAndGlyphs">100</text><text transform="translate(150.2,444.9) rotate(-90)" font-size="13" font-family="Liberation Sans" fill="#333" textLength="19.4" lengthAdjust="spacingAndGlyphs">200</text><text transform="translate(150.2,304.2) rotate(-90)" font-size="13" font-family="Liberation Sans" fill="#333" textLength="19.4" lengthAdjust="spacingAndGlyphs">300</text></svg>
<svg style="left:0px;top:0px;" width="2048" height="1287" viewBox="0 0 2048 1287"><rect x="617.8" y="282.5" width="693.70" height="897.70" fill="#fdf8f3" stroke="#fccd93" stroke-width="5" /><rect x="669.5" y="522.5" width="592.00" height="419.00" fill="none" stroke="#a0a0a0" stroke-width="1" /><circle cx="677.4" cy="289.2" r="5.8" fill="none" stroke="#333" stroke-width="1"/><circle cx="803.2" cy="289.2" r="5.8" fill="none" stroke="#333" stroke-width="1"/><text x="673.1" y="291.7" font-size="7" fill="#1a1a1a" textLength="8.5" lengthAdjust="spacingAndGlyphs">X10</text><text x="799.0" y="291.7" font-size="7" fill="#1a1a1a" textLength="8.5" lengthAdjust="spacingAndGlyphs">X11</text><line x1="677.5" y1="295" x2="677.5" y2="310" stroke="#8a8a8a" stroke-width="1"/><line x1="803.5" y1="295" x2="803.5" y2="310" stroke="#8a8a8a" stroke-width="1"/><line x1="665.6" y1="298.5" x2="809.7" y2="298.5" stroke="#444" stroke-width="1"/><line x1="619" y1="319.5" x2="848" y2="319.5" stroke="#444" stroke-width="1"/><line x1="656.5" y1="319.6" x2="656.5" y2="342" stroke="#333" stroke-width="1"/><line x1="740.5" y1="319.6" x2="740.5" y2="342" stroke="#333" stroke-width="1"/><line x1="782.5" y1="319.6" x2="782.5" y2="342" stroke="#333" stroke-width="1"/><line x1="824.5" y1="319.6" x2="824.5" y2="342" stroke="#333" stroke-width="1"/><line x1="691.5" y1="309" x2="691.5" y2="342" stroke="#333" stroke-width="1"/><line x1="695.5" y1="309" x2="695.5" y2="342" stroke="#333" stroke-width="1"/><line x1="619" y1="339.5" x2="691" y2="339.5" stroke="#333" stroke-width="1"/><line x1="619" y1="342.5" x2="848" y2="342.5" stroke="#111" stroke-width="3"/><line x1="619" y1="349.5" x2="838" y2="349.5" stroke="#8a8a8a" stroke-width="1"/><line x1="619" y1="476.5" x2="848" y2="476.5" stroke="#8a8a8a" stroke-width="1"/><line x1="619" y1="602.5" x2="822" y2="602.5" stroke="#8a8a8a" stroke-width="1"/><circle cx="634.8" cy="349.7" r="5.8" fill="none" stroke="#333" stroke-width="1"/><text x="631.3" y="352.2" font-size="7" fill="#1a1a1a" textLength="7" lengthAdjust="spacingAndGlyphs">Y7</text><circle cx="634.8" cy="476" r="5.8" fill="none" stroke="#333" stroke-width="1"/><text x="631.3" y="478.5" font-size="7" fill="#1a1a1a" textLength="7" lengthAdjust="spacingAndGlyphs">Y6</text><circle cx="634.8" cy="602.8" r="5.8" fill="none" stroke="#333" stroke-width="1"/><text x="631.3" y="605.3" font-size="7" fill="#1a1a1a" textLength="7" lengthAdjust="spacingAndGlyphs">Y5</text><line x1="644.5" y1="335" x2="644.5" y2="614" stroke="#444" stroke-width="1"/><line x1="671.5" y1="350" x2="671.5" y2="372" stroke="#333" stroke-width="1"/><line x1="671" y1="368" x2="671" y2="631" stroke="#111" stroke-width="2"/><line x1="803" y1="372" x2="803" y2="631" stroke="#111" stroke-width="2"/><line x1="671" y1="610.5" x2="818" y2="610.5" stroke="#8a8a8a" stroke-width="1"/><rect x="672.5" y="345.5" width="9.00" height="9.00" fill="#6e6e6e" stroke="#222" stroke-width="1.4" /><rect x="798.7" y="345.5" width="9.00" height="9.00" fill="#6e6e6e" stroke="#222" stroke-width="1.4" /><rect x="672.5" y="472.5" width="9.00" height="9.00" fill="#6e6e6e" stroke="#222" stroke-width="1.4" /><rect x="798.7" y="472.5" width="9.00" height="9.00" fill="#6e6e6e" stroke="#222" stroke-width="1.4" /><rect x="672.5" y="605.5" width="9.00" height="9.00" fill="#6e6e6e" stroke="#222" stroke-width="1.4" /><rect x="798.7" y="605.5" width="9.00" height="9.00" fill="#6e6e6e" stroke="#222" stroke-width="1.4" /><path d="M674 630 V634.5 H803 V630" fill="none" stroke="#333" stroke-width="1"/><line x1="668" y1="630" x2="677" y2="630" stroke="#111" stroke-width="2"/><line x1="798" y1="630" x2="808" y2="630" stroke="#111" stroke-width="2"/><path d="M797 356 V372 H803 M803 356 Q816 358 816 370 H803" fill="none" stroke="#333" stroke-width="0.9"/><line x1="803" y1="372" x2="848" y2="372" stroke="#111" stroke-width="2"/><rect x="654" y="343" width="4.00" height="4.00" fill="#333" stroke="#333" stroke-width="0.5" /><rect x="696" y="343" width="4.00" height="4.00" fill="#333" stroke="#333" stroke-width="0.5" /><rect x="738" y="343" width="4.00" height="4.00" fill="#333" stroke="#333" stroke-width="0.5" /><rect x="780" y="343" width="4.00" height="4.00" fill="#333" stroke="#333" stroke-width="0.5" /><rect x="822.5" y="343" width="4.00" height="4.00" fill="#333" stroke="#333" stroke-width="0.5" /><text x="633.0" y="318.6" font-size="4.5" fill="#777" textLength="6" lengthAdjust="spacingAndGlyphs">3150</text><text x="661.0" y="318.6" font-size="4.5" fill="#777" textLength="6" lengthAdjust="spacingAndGlyphs">450</text><text x="686.0" y="318.6" font-size="4.5" fill="#777" textLength="6" lengthAdjust="spacingAndGlyphs">450</text><text x="714.0" y="318.6" font-size="4.5" fill="#777" textLength="6" lengthAdjust="spacingAndGlyphs">3150</text><text x="756.0" y="318.6" font-size="4.5" fill="#777" textLength="6" lengthAdjust="spacingAndGlyphs">3150</text><text x="789.0" y="318.6" font-size="4.5" fill="#777" textLength="6" lengthAdjust="spacingAndGlyphs">450</text><text x="809.0" y="318.6" font-size="4.5" fill="#777" textLength="6" lengthAdjust="spacingAndGlyphs">450</text><text x="837.0" y="318.6" font-size="4.5" fill="#777" textLength="6" lengthAdjust="spacingAndGlyphs">3150</text><text x="715.5" y="297.6" font-size="4.5" fill="#777" textLength="7" lengthAdjust="spacingAndGlyphs">3600</text><text x="637.5" y="421.6" font-size="4.5" fill="#777" textLength="7" lengthAdjust="spacingAndGlyphs">3600</text><text x="637.5" y="541.6" font-size="4.5" fill="#777" textLength="7" lengthAdjust="spacingAndGlyphs">3600</text><line x1="1120.5" y1="479.5" x2="1257.4" y2="479.5" stroke="#333" stroke-width="1"/><line x1="1128.5" y1="478" x2="1128.5" y2="482" stroke="#333" stroke-width="1"/><line x1="1147.5" y1="478" x2="1147.5" y2="482" stroke="#333" stroke-width="1"/><line x1="1170.5" y1="478" x2="1170.5" y2="482" stroke="#333" stroke-width="1"/><line x1="1190.5" y1="478" x2="1190.5" y2="482" stroke="#333" stroke-width="1"/><line x1="1215.5" y1="478" x2="1215.5" y2="482" stroke="#333" stroke-width="1"/><line x1="1235.5" y1="478" x2="1235.5" y2="482" stroke="#333" stroke-width="1"/><line x1="1250.5" y1="478" x2="1250.5" y2="482" stroke="#333" stroke-width="1"/><line x1="1121" y1="485" x2="1250" y2="485" stroke="#1a7a1a" stroke-width="2"/><line x1="1122" y1="486" x2="1122" y2="608" stroke="#1a7a1a" stroke-width="2"/><line x1="1121" y1="482" x2="1121" y2="505" stroke="#111" stroke-width="2"/><line x1="1252.5" y1="486" x2="1252.5" y2="608" stroke="#1a4a1a" stroke-width="3"/><line x1="1246" y1="608" x2="1253" y2="608" stroke="#1a7a1a" stroke-width="2"/><rect x="1121.8" y="481.2" width="9.00" height="9.00" fill="#6e6e6e" stroke="#222" stroke-width="1.4" /><rect x="1249.5" y="481.2" width="9.00" height="9.00" fill="#6e6e6e" stroke="#222" stroke-width="1.4" /><rect x="1132" y="486.3" width="114.00" height="4.70" fill="#a6a6a6" stroke="#333" stroke-width="0.9" /><path d="M1132.8 490.2 L1145.5 487.1" fill="none" stroke="#f4f4f4" stroke-width="1.1"/><path d="M1147.0 490.2 L1159.7 487.1" fill="none" stroke="#f4f4f4" stroke-width="1.1"/><line x1="1146.5" y1="486.3" x2="1146.5" y2="491" stroke="#333" stroke-width="1"/><path d="M1161.3 490.2 L1174.0 487.1" fill="none" stroke="#f4f4f4" stroke-width="1.1"/><line x1="1160.5" y1="486.3" x2="1160.5" y2="491" stroke="#333" stroke-width="1"/><path d="M1175.5 490.2 L1188.2 487.1" fill="none" stroke="#f4f4f4" stroke-width="1.1"/><line x1="1174.5" y1="486.3" x2="1174.5" y2="491" stroke="#333" stroke-width="1"/><path d="M1189.8 490.2 L1202.5 487.1" fill="none" stroke="#f4f4f4" stroke-width="1.1"/><line x1="1189.5" y1="486.3" x2="1189.5" y2="491" stroke="#333" stroke-width="1"/><path d="M1204.0 490.2 L1216.7 487.1" fill="none" stroke="#f4f4f4" stroke-width="1.1"/><line x1="1203.5" y1="486.3" x2="1203.5" y2="491" stroke="#333" stroke-width="1"/><path d="M1218.3 490.2 L1231.0 487.1" fill="none" stroke="#f4f4f4" stroke-width="1.1"/><line x1="1217.5" y1="486.3" x2="1217.5" y2="491" stroke="#333" stroke-width="1"/><path d="M1232.5 490.2 L1245.2 487.1" fill="none" stroke="#f4f4f4" stroke-width="1.1"/><line x1="1231.5" y1="486.3" x2="1231.5" y2="491" stroke="#333" stroke-width="1"/><rect x="1123.5" y="502" width="5.10" height="83.00" fill="#a6a6a6" stroke="#333" stroke-width="0.9" /><path d="M1124.3 502.8 L1127.8 515.0" fill="none" stroke="#f4f4f4" stroke-width="1.1"/><path d="M1124.3 516.6 L1127.8 528.9" fill="none" stroke="#f4f4f4" stroke-width="1.1"/><line x1="1123.5" y1="515.5" x2="1128.6" y2="515.5" stroke="#333" stroke-width="1"/><path d="M1124.3 530.5 L1127.8 542.7" fill="none" stroke="#f4f4f4" stroke-width="1.1"/><line x1="1123.5" y1="529.5" x2="1128.6" y2="529.5" stroke="#333" stroke-width="1"/><path d="M1124.3 544.3 L1127.8 556.5" fill="none" stroke="#f4f4f4" stroke-width="1.1"/><line x1="1123.5" y1="543.5" x2="1128.6" y2="543.5" stroke="#333" stroke-width="1"/><path d="M1124.3 558.1 L1127.8 570.4" fill="none" stroke="#f4f4f4" stroke-width="1.1"/><line x1="1123.5" y1="557.5" x2="1128.6" y2="557.5" stroke="#333" stroke-width="1"/><path d="M1124.3 572.0 L1127.8 584.2" fill="none" stroke="#f4f4f4" stroke-width="1.1"/><line x1="1123.5" y1="571.5" x2="1128.6" y2="571.5" stroke="#333" stroke-width="1"/><rect x="1247.5" y="509" width="4.30" height="76.00" fill="#a6a6a6" stroke="#333" stroke-width="0.9" /><path d="M1248.3 509.8 L1251.0 520.9" fill="none" stroke="#f4f4f4" stroke-width="1.1"/><path d="M1248.3 522.5 L1251.0 533.5" fill="none" stroke="#f4f4f4" stroke-width="1.1"/><line x1="1247.5" y1="521.5" x2="1251.8" y2="521.5" stroke="#333" stroke-width="1"/><path d="M1248.3 535.1 L1251.0 546.2" fill="none" stroke="#f4f4f4" stroke-width="1.1"/><line x1="1247.5" y1="534.5" x2="1251.8" y2="534.5" stroke="#333" stroke-width="1"/><path d="M1248.3 547.8 L1251.0 558.9" fill="none" stroke="#f4f4f4" stroke-width="1.1"/><line x1="1247.5" y1="547.5" x2="1251.8" y2="547.5" stroke="#333" stroke-width="1"/><path d="M1248.3 560.5 L1251.0 571.5" fill="none" stroke="#f4f4f4" stroke-width="1.1"/><line x1="1247.5" y1="559.5" x2="1251.8" y2="559.5" stroke="#333" stroke-width="1"/><path d="M1248.3 573.1 L1251.0 584.2" fill="none" stroke="#f4f4f4" stroke-width="1.1"/><line x1="1247.5" y1="572.5" x2="1251.8" y2="572.5" stroke="#333" stroke-width="1"/><rect x="1144.4" y="501.5" width="85.10" height="12.20" fill="#a6a6a6" stroke="#333" stroke-width="0.9" /><path d="M1145.2 512.9 L1160.6 502.3" fill="none" stroke="#f4f4f4" stroke-width="1.1"/><path d="M1145.2 508.2 L1153.8 502.3 M1152.1 512.9 L1160.6 507.0" fill="none" stroke="#e8e8e8" stroke-width="0.9"/><path d="M1162.2 512.9 L1177.6 502.3" fill="none" stroke="#f4f4f4" stroke-width="1.1"/><path d="M1162.2 508.2 L1170.8 502.3 M1169.1 512.9 L1177.6 507.0" fill="none" stroke="#e8e8e8" stroke-width="0.9"/><line x1="1161.5" y1="501.5" x2="1161.5" y2="513.7" stroke="#333" stroke-width="1"/><path d="M1179.2 512.9 L1194.7 502.3" fill="none" stroke="#f4f4f4" stroke-width="1.1"/><path d="M1179.2 508.2 L1187.8 502.3 M1186.1 512.9 L1194.7 507.0" fill="none" stroke="#e8e8e8" stroke-width="0.9"/><line x1="1178.5" y1="501.5" x2="1178.5" y2="513.7" stroke="#333" stroke-width="1"/><path d="M1196.3 512.9 L1211.7 502.3" fill="none" stroke="#f4f4f4" stroke-width="1.1"/><path d="M1196.3 508.2 L1204.8 502.3 M1203.1 512.9 L1211.7 507.0" fill="none" stroke="#e8e8e8" stroke-width="0.9"/><line x1="1195.5" y1="501.5" x2="1195.5" y2="513.7" stroke="#333" stroke-width="1"/><path d="M1213.3 512.9 L1228.7 502.3" fill="none" stroke="#f4f4f4" stroke-width="1.1"/><path d="M1213.3 508.2 L1221.8 502.3 M1220.1 512.9 L1228.7 507.0" fill="none" stroke="#e8e8e8" stroke-width="0.9"/><line x1="1212.5" y1="501.5" x2="1212.5" y2="513.7" stroke="#333" stroke-width="1"/><rect x="1144.4" y="526" width="85.10" height="11.60" fill="#a6a6a6" stroke="#333" stroke-width="0.9" /><path d="M1145.2 536.8 L1160.6 526.8" fill="none" stroke="#f4f4f4" stroke-width="1.1"/><path d="M1145.2 532.4 L1153.8 526.8 M1152.1 536.8 L1160.6 531.2" fill="none" stroke="#e8e8e8" stroke-width="0.9"/><path d="M1162.2 536.8 L1177.6 526.8" fill="none" stroke="#f4f4f4" stroke-width="1.1"/><path d="M1162.2 532.4 L1170.8 526.8 M1169.1 536.8 L1177.6 531.2" fill="none" stroke="#e8e8e8" stroke-width="0.9"/><line x1="1161.5" y1="526" x2="1161.5" y2="537.6" stroke="#333" stroke-width="1"/><path d="M1179.2 536.8 L1194.7 526.8" fill="none" stroke="#f4f4f4" stroke-width="1.1"/><path d="M1179.2 532.4 L1187.8 526.8 M1186.1 536.8 L1194.7 531.2" fill="none" stroke="#e8e8e8" stroke-width="0.9"/><line x1="1178.5" y1="526" x2="1178.5" y2="537.6" stroke="#333" stroke-width="1"/><path d="M1196.3 536.8 L1211.7 526.8" fill="none" stroke="#f4f4f4" stroke-width="1.1"/><path d="M1196.3 532.4 L1204.8 526.8 M1203.1 536.8 L1211.7 531.2" fill="none" stroke="#e8e8e8" stroke-width="0.9"/><line x1="1195.5" y1="526" x2="1195.5" y2="537.6" stroke="#333" stroke-width="1"/><path d="M1213.3 536.8 L1228.7 526.8" fill="none" stroke="#f4f4f4" stroke-width="1.1"/><path d="M1213.3 532.4 L1221.8 526.8 M1220.1 536.8 L1228.7 531.2" fill="none" stroke="#e8e8e8" stroke-width="0.9"/><line x1="1212.5" y1="526" x2="1212.5" y2="537.6" stroke="#333" stroke-width="1"/><rect x="1144.4" y="550.2" width="85.10" height="11.80" fill="#a6a6a6" stroke="#333" stroke-width="0.9" /><path d="M1145.2 561.2 L1160.6 551.0" fill="none" stroke="#f4f4f4" stroke-width="1.1"/><path d="M1145.2 556.7 L1153.8 551.0 M1152.1 561.2 L1160.6 555.5" fill="none" stroke="#e8e8e8" stroke-width="0.9"/><path d="M1162.2 561.2 L1177.6 551.0" fill="none" stroke="#f4f4f4" stroke-width="1.1"/><path d="M1162.2 556.7 L1170.8 551.0 M1169.1 561.2 L1177.6 555.5" fill="none" stroke="#e8e8e8" stroke-width="0.9"/><line x1="1161.5" y1="550.2" x2="1161.5" y2="562" stroke="#333" stroke-width="1"/><path d="M1179.2 561.2 L1194.7 551.0" fill="none" stroke="#f4f4f4" stroke-width="1.1"/><path d="M1179.2 556.7 L1187.8 551.0 M1186.1 561.2 L1194.7 555.5" fill="none" stroke="#e8e8e8" stroke-width="0.9"/><line x1="1178.5" y1="550.2" x2="1178.5" y2="562" stroke="#333" stroke-width="1"/><path d="M1196.3 561.2 L1211.7 551.0" fill="none" stroke="#f4f4f4" stroke-width="1.1"/><path d="M1196.3 556.7 L1204.8 551.0 M1203.1 561.2 L1211.7 555.5" fill="none" stroke="#e8e8e8" stroke-width="0.9"/><line x1="1195.5" y1="550.2" x2="1195.5" y2="562" stroke="#333" stroke-width="1"/><path d="M1213.3 561.2 L1228.7 551.0" fill="none" stroke="#f4f4f4" stroke-width="1.1"/><path d="M1213.3 556.7 L1221.8 551.0 M1220.1 561.2 L1228.7 555.5" fill="none" stroke="#e8e8e8" stroke-width="0.9"/><line x1="1212.5" y1="550.2" x2="1212.5" y2="562" stroke="#333" stroke-width="1"/><line x1="1150.5" y1="513.7" x2="1150.5" y2="526" stroke="#333" stroke-width="1"/><line x1="1150.5" y1="537.6" x2="1150.5" y2="550.2" stroke="#333" stroke-width="1"/><line x1="1122" y1="586" x2="1250" y2="586" stroke="#1010e0" stroke-width="2"/><path d="M1138 608 H1152 V586" fill="none" stroke="#1010e0" stroke-width="2.2"/><line x1="1122" y1="608" x2="1138" y2="608" stroke="#1a7a1a" stroke-width="2"/><line x1="1136.5" y1="586" x2="1136.5" y2="605" stroke="#333" stroke-width="1"/><line x1="1124" y1="604.5" x2="1152" y2="604.5" stroke="#333" stroke-width="1"/><line x1="1135" y1="608" x2="1145" y2="608" stroke="#111" stroke-width="2"/><rect x="1135" y="580" width="18.00" height="6.00" fill="#a6a6a6" stroke="#333" stroke-width="0.9" /><path d="M1135.8 585.2 L1152.2 580.8" fill="none" stroke="#f4f4f4" stroke-width="1.1"/><rect x="1170" y="580" width="34.00" height="6.00" fill="#a6a6a6" stroke="#333" stroke-width="0.9" /><path d="M1170.8 585.2 L1186.2 580.8" fill="none" stroke="#f4f4f4" stroke-width="1.1"/><path d="M1187.8 585.2 L1203.2 580.8" fill="none" stroke="#f4f4f4" stroke-width="1.1"/><line x1="1187.5" y1="580" x2="1187.5" y2="586" stroke="#333" stroke-width="1"/><rect x="1224" y="580" width="15.00" height="6.00" fill="#a6a6a6" stroke="#333" stroke-width="0.9" /><path d="M1224.8 585.2 L1238.2 580.8" fill="none" stroke="#f4f4f4" stroke-width="1.1"/><rect x="1155" y="586" width="13.00" height="6.00" fill="none" stroke="#333" stroke-width="0.8" /><rect x="1207" y="586" width="13.00" height="6.00" fill="none" stroke="#333" stroke-width="0.8" /><path d="M1229.5 563 V493.3 H1246.4 V580 H1223 V563 H1204.6 V586" fill="none" stroke="#e0406a" stroke-width="1"/><line x1="1230" y1="527.5" x2="1246" y2="527.5" stroke="#e0406a" stroke-width="1"/><line x1="1240.5" y1="490" x2="1240.5" y2="507" stroke="#333" stroke-width="1"/><line x1="1251" y1="507" x2="1251" y2="520" stroke="#111" stroke-width="2"/><rect x="985.8" y="474.5" width="8.90" height="12.40" fill="#c4c4c4" stroke="#333" stroke-width="1.1" /><line x1="985.8" y1="474.5" x2="994.7" y2="486.9" stroke="#333" stroke-width="0.9"/><rect x="996.3" y="474.5" width="8.70" height="17.10" fill="#c4c4c4" stroke="#333" stroke-width="1.1" /><line x1="996.3" y1="474.5" x2="1005" y2="491.6" stroke="#333" stroke-width="0.9"/><rect x="1007.3" y="474.5" width="9.70" height="21.00" fill="#c4c4c4" stroke="#333" stroke-width="1.1" /><line x1="1007.3" y1="474.5" x2="1017" y2="495.5" stroke="#333" stroke-width="0.9"/><rect x="1019.4" y="474.5" width="9.40" height="25.30" fill="#c4c4c4" stroke="#333" stroke-width="1.1" /><line x1="1019.4" y1="474.5" x2="1028.8" y2="499.8" stroke="#333" stroke-width="0.9"/><rect x="990.2" y="507.3" width="4.50" height="13.30" fill="#8a8a8a" stroke="#333" stroke-width="1" /><rect x="1000.9" y="507.3" width="4.40" height="18.30" fill="#8a8a8a" stroke="#333" stroke-width="1" /><rect x="1012" y="507.3" width="5.00" height="21.70" fill="#8a8a8a" stroke="#333" stroke-width="1" /><rect x="1024" y="507.3" width="4.80" height="26.10" fill="#8a8a8a" stroke="#333" stroke-width="1" /><path d="M996.5 548.3 H1003 M999.8 548.3 V564.4 M996.5 564.4 H1003" fill="none" stroke="#e0406a" stroke-width="1.6"/><path d="M1007.5 553 H1013 M1010.3 553 V564.4 M1007.5 564.4 H1013" fill="none" stroke="#e0406a" stroke-width="1.4"/><rect x="1015" y="551.9" width="17.20" height="11.20" fill="#e6c8b0" stroke="#e0406a" stroke-width="1.4" /><line x1="1015" y1="557.5" x2="1032.2" y2="557.5" stroke="#e0406a" stroke-width="1"/><circle cx="1041" cy="699.3" r="5.5" fill="none" stroke="#333" stroke-width="1"/><circle cx="1167.7" cy="699.3" r="5.5" fill="none" stroke="#333" stroke-width="1"/><text x="1036.8" y="701.8" font-size="7" fill="#1a1a1a" textLength="8.5" lengthAdjust="spacingAndGlyphs">X12</text><text x="1163.5" y="701.8" font-size="7" fill="#1a1a1a" textLength="8.5" lengthAdjust="spacingAndGlyphs">X13</text><line x1="1041.5" y1="705" x2="1041.5" y2="1068" stroke="#8a8a8a" stroke-width="1"/><line x1="1167.5" y1="705" x2="1167.5" y2="1068" stroke="#8a8a8a" stroke-width="1"/><line x1="1029.4" y1="708.5" x2="1173.9" y2="708.5" stroke="#444" stroke-width="1"/><line x1="982" y1="730.5" x2="1212.7" y2="730.5" stroke="#444" stroke-width="1"/><text x="996.0" y="729.1" font-size="4.5" fill="#777" textLength="6" lengthAdjust="spacingAndGlyphs">3150</text><text x="1026.0" y="729.1" font-size="4.5" fill="#777" textLength="6" lengthAdjust="spacingAndGlyphs">450</text><text x="1045.0" y="729.1" font-size="4.5" fill="#777" textLength="6" lengthAdjust="spacingAndGlyphs">450</text><text x="1080.0" y="729.1" font-size="4.5" fill="#777" textLength="6" lengthAdjust="spacingAndGlyphs">3150</text><text x="1122.0" y="729.1" font-size="4.5" fill="#777" textLength="6" lengthAdjust="spacingAndGlyphs">3150</text><text x="1153.0" y="729.1" font-size="4.5" fill="#777" textLength="6" lengthAdjust="spacingAndGlyphs">450</text><text x="1174.0" y="729.1" font-size="4.5" fill="#777" textLength="6" lengthAdjust="spacingAndGlyphs">450</text><text x="1203.0" y="729.1" font-size="4.5" fill="#777" textLength="6" lengthAdjust="spacingAndGlyphs">3150</text><text x="1100.5" y="707.6" font-size="4.5" fill="#777" textLength="7" lengthAdjust="spacingAndGlyphs">3600</text><text x="1001.5" y="824.6" font-size="4.5" fill="#777" textLength="7" lengthAdjust="spacingAndGlyphs">3600</text><text x="1001.5" y="951.6" font-size="4.5" fill="#777" textLength="7" lengthAdjust="spacingAndGlyphs">3600</text><line x1="1020.5" y1="730" x2="1020.5" y2="752" stroke="#333" stroke-width="1"/><line x1="1061.5" y1="730" x2="1061.5" y2="752" stroke="#333" stroke-width="1"/><line x1="1104.5" y1="730" x2="1104.5" y2="752" stroke="#333" stroke-width="1"/><line x1="1146.5" y1="730" x2="1146.5" y2="752" stroke="#333" stroke-width="1"/><line x1="1189.5" y1="730" x2="1189.5" y2="752" stroke="#333" stroke-width="1"/><line x1="1055.5" y1="718.4" x2="1055.5" y2="752" stroke="#333" stroke-width="1"/><line x1="1058.5" y1="718.4" x2="1058.5" y2="752" stroke="#333" stroke-width="1"/><line x1="982" y1="750.5" x2="1055" y2="750.5" stroke="#333" stroke-width="1"/><line x1="982" y1="753.5" x2="1212.7" y2="753.5" stroke="#111" stroke-width="3"/><line x1="982" y1="760.5" x2="1212.7" y2="760.5" stroke="#8a8a8a" stroke-width="1"/><line x1="982" y1="886.5" x2="1212.3" y2="886.5" stroke="#8a8a8a" stroke-width="1"/><line x1="982" y1="1013.5" x2="1185" y2="1013.5" stroke="#8a8a8a" stroke-width="1"/><line x1="1032" y1="1020.5" x2="1183.6" y2="1020.5" stroke="#8a8a8a" stroke-width="1"/><circle cx="998.9" cy="760.4" r="5.5" fill="none" stroke="#333" stroke-width="1"/><text x="995.4" y="762.9" font-size="7" fill="#1a1a1a" textLength="7" lengthAdjust="spacingAndGlyphs">Y7</text><circle cx="998.9" cy="886.7" r="5.5" fill="none" stroke="#333" stroke-width="1"/><text x="995.4" y="889.2" font-size="7" fill="#1a1a1a" textLength="7" lengthAdjust="spacingAndGlyphs">Y6</text><circle cx="998.9" cy="1013.3" r="5.5" fill="none" stroke="#333" stroke-width="1"/><text x="995.4" y="1015.8" font-size="7" fill="#1a1a1a" textLength="7" lengthAdjust="spacingAndGlyphs">Y5</text><line x1="1008.5" y1="744.8" x2="1008.5" y2="1024.5" stroke="#444" stroke-width="1"/><line x1="1035.5" y1="753.5" x2="1035.5" y2="1043" stroke="#111" stroke-width="3"/><line x1="1037.5" y1="760" x2="1037.5" y2="1040" stroke="#1a7a1a" stroke-width="1"/><line x1="1167.5" y1="760" x2="1167.5" y2="1043" stroke="#1a4a1a" stroke-width="3"/><line x1="1041" y1="758" x2="1167" y2="758" stroke="#1a7a1a" stroke-width="2"/><line x1="1032" y1="1040.5" x2="1171" y2="1040.5" stroke="#333" stroke-width="1"/><line x1="1041" y1="1045.5" x2="1167.7" y2="1045.5" stroke="#333" stroke-width="1"/><rect x="1036" y="1040" width="7.00" height="6.00" fill="#1a7a1a" stroke="#1a4a1a" stroke-width="0.6" /><rect x="1164" y="1040" width="7.00" height="6.00" fill="#1a7a1a" stroke="#1a4a1a" stroke-width="0.6" /><rect x="1036.75" y="756.15" width="8.50" height="8.50" fill="#6e6e6e" stroke="#222" stroke-width="1.4" /><rect x="1163.45" y="756.15" width="8.50" height="8.50" fill="#6e6e6e" stroke="#222" stroke-width="1.4" /><rect x="1036.75" y="882.45" width="8.50" height="8.50" fill="#6e6e6e" stroke="#222" stroke-width="1.4" /><rect x="1163.45" y="882.45" width="8.50" height="8.50" fill="#6e6e6e" stroke="#222" stroke-width="1.4" /><rect x="1036.75" y="1016.25" width="8.50" height="8.50" fill="#6e6e6e" stroke="#222" stroke-width="1.4" /><rect x="1163.45" y="1016.25" width="8.50" height="8.50" fill="#6e6e6e" stroke="#222" stroke-width="1.4" /><rect x="1046" y="760.4" width="115.00" height="4.20" fill="#a6a6a6" stroke="#333" stroke-width="0.9" /><path d="M1046.8 763.8 L1061.6 761.2" fill="none" stroke="#f4f4f4" stroke-width="1.1"/><path d="M1063.2 763.8 L1078.1 761.2" fill="none" stroke="#f4f4f4" stroke-width="1.1"/><line x1="1062.5" y1="760.4" x2="1062.5" y2="764.6" stroke="#333" stroke-width="1"/><path d="M1079.7 763.8 L1094.5 761.2" fill="none" stroke="#f4f4f4" stroke-width="1.1"/><line x1="1078.5" y1="760.4" x2="1078.5" y2="764.6" stroke="#333" stroke-width="1"/><path d="M1096.1 763.8 L1110.9 761.2" fill="none" stroke="#f4f4f4" stroke-width="1.1"/><line x1="1095.5" y1="760.4" x2="1095.5" y2="764.6" stroke="#333" stroke-width="1"/><path d="M1112.5 763.8 L1127.3 761.2" fill="none" stroke="#f4f4f4" stroke-width="1.1"/><line x1="1111.5" y1="760.4" x2="1111.5" y2="764.6" stroke="#333" stroke-width="1"/><path d="M1128.9 763.8 L1143.8 761.2" fill="none" stroke="#f4f4f4" stroke-width="1.1"/><line x1="1128.5" y1="760.4" x2="1128.5" y2="764.6" stroke="#333" stroke-width="1"/><path d="M1145.4 763.8 L1160.2 761.2" fill="none" stroke="#f4f4f4" stroke-width="1.1"/><line x1="1144.5" y1="760.4" x2="1144.5" y2="764.6" stroke="#333" stroke-width="1"/><rect x="1038" y="775" width="4.60" height="84.80" fill="#a6a6a6" stroke="#333" stroke-width="0.9" /><path d="M1038.8 775.8 L1041.8 786.3" fill="none" stroke="#f4f4f4" stroke-width="1.1"/><path d="M1038.8 787.9 L1041.8 798.4" fill="none" stroke="#f4f4f4" stroke-width="1.1"/><line x1="1038" y1="787.5" x2="1042.6" y2="787.5" stroke="#333" stroke-width="1"/><path d="M1038.8 800.0 L1041.8 810.5" fill="none" stroke="#f4f4f4" stroke-width="1.1"/><line x1="1038" y1="799.5" x2="1042.6" y2="799.5" stroke="#333" stroke-width="1"/><path d="M1038.8 812.1 L1041.8 822.7" fill="none" stroke="#f4f4f4" stroke-width="1.1"/><line x1="1038" y1="811.5" x2="1042.6" y2="811.5" stroke="#333" stroke-width="1"/><path d="M1038.8 824.3 L1041.8 834.8" fill="none" stroke="#f4f4f4" stroke-width="1.1"/><line x1="1038" y1="823.5" x2="1042.6" y2="823.5" stroke="#333" stroke-width="1"/><path d="M1038.8 836.4 L1041.8 846.9" fill="none" stroke="#f4f4f4" stroke-width="1.1"/><line x1="1038" y1="835.5" x2="1042.6" y2="835.5" stroke="#333" stroke-width="1"/><path d="M1038.8 848.5 L1041.8 859.0" fill="none" stroke="#f4f4f4" stroke-width="1.1"/><line x1="1038" y1="847.5" x2="1042.6" y2="847.5" stroke="#333" stroke-width="1"/><rect x="1160.7" y="784.4" width="5.80" height="75.40" fill="#a6a6a6" stroke="#333" stroke-width="0.9" /><path d="M1161.5 785.2 L1165.7 796.2" fill="none" stroke="#f4f4f4" stroke-width="1.1"/><path d="M1161.5 797.8 L1165.7 808.7" fill="none" stroke="#f4f4f4" stroke-width="1.1"/><line x1="1160.7" y1="796.5" x2="1166.5" y2="796.5" stroke="#333" stroke-width="1"/><path d="M1161.5 810.3 L1165.7 821.3" fill="none" stroke="#f4f4f4" stroke-width="1.1"/><line x1="1160.7" y1="809.5" x2="1166.5" y2="809.5" stroke="#333" stroke-width="1"/><path d="M1161.5 822.9 L1165.7 833.9" fill="none" stroke="#f4f4f4" stroke-width="1.1"/><line x1="1160.7" y1="822.5" x2="1166.5" y2="822.5" stroke="#333" stroke-width="1"/><path d="M1161.5 835.5 L1165.7 846.4" fill="none" stroke="#f4f4f4" stroke-width="1.1"/><line x1="1160.7" y1="834.5" x2="1166.5" y2="834.5" stroke="#333" stroke-width="1"/><path d="M1161.5 848.0 L1165.7 859.0" fill="none" stroke="#f4f4f4" stroke-width="1.1"/><line x1="1160.7" y1="847.5" x2="1166.5" y2="847.5" stroke="#333" stroke-width="1"/><rect x="1058.9" y="774.3" width="11.50" height="64.20" fill="#a8a8a8" stroke="#333" stroke-width="1" /><line x1="1064.5" y1="774.3" x2="1064.5" y2="838.5" stroke="#333" stroke-width="1"/><line x1="1058.9" y1="774.5" x2="1070.4" y2="774.5" stroke="#333" stroke-width="1"/><path d="M1059.9 775.3 L1063.9 789.3 M1065.4 775.3 L1069.4 789.3" fill="none" stroke="#f0f0f0" stroke-width="0.8"/><line x1="1058.9" y1="790.5" x2="1070.4" y2="790.5" stroke="#333" stroke-width="1"/><path d="M1059.9 791.3 L1063.9 805.3 M1065.4 791.3 L1069.4 805.3" fill="none" stroke="#f0f0f0" stroke-width="0.8"/><line x1="1058.9" y1="806.5" x2="1070.4" y2="806.5" stroke="#333" stroke-width="1"/><path d="M1059.9 807.4 L1063.9 821.4 M1065.4 807.4 L1069.4 821.4" fill="none" stroke="#f0f0f0" stroke-width="0.8"/><line x1="1058.9" y1="822.5" x2="1070.4" y2="822.5" stroke="#333" stroke-width="1"/><path d="M1059.9 823.4 L1063.9 837.4 M1065.4 823.4 L1069.4 837.4" fill="none" stroke="#f0f0f0" stroke-width="0.8"/><rect x="1083.3" y="774.3" width="11.50" height="64.20" fill="#a8a8a8" stroke="#333" stroke-width="1" /><line x1="1089.5" y1="774.3" x2="1089.5" y2="838.5" stroke="#333" stroke-width="1"/><line x1="1083.3" y1="774.5" x2="1094.8" y2="774.5" stroke="#333" stroke-width="1"/><path d="M1084.3 775.3 L1088.3 789.3 M1089.8 775.3 L1093.8 789.3" fill="none" stroke="#f0f0f0" stroke-width="0.8"/><line x1="1083.3" y1="790.5" x2="1094.8" y2="790.5" stroke="#333" stroke-width="1"/><path d="M1084.3 791.3 L1088.3 805.3 M1089.8 791.3 L1093.8 805.3" fill="none" stroke="#f0f0f0" stroke-width="0.8"/><line x1="1083.3" y1="806.5" x2="1094.8" y2="806.5" stroke="#333" stroke-width="1"/><path d="M1084.3 807.4 L1088.3 821.4 M1089.8 807.4 L1093.8 821.4" fill="none" stroke="#f0f0f0" stroke-width="0.8"/><line x1="1083.3" y1="822.5" x2="1094.8" y2="822.5" stroke="#333" stroke-width="1"/><path d="M1084.3 823.4 L1088.3 837.4 M1089.8 823.4 L1093.8 837.4" fill="none" stroke="#f0f0f0" stroke-width="0.8"/><rect x="1108.2" y="774.3" width="11.50" height="64.20" fill="#a8a8a8" stroke="#333" stroke-width="1" /><line x1="1113.5" y1="774.3" x2="1113.5" y2="838.5" stroke="#333" stroke-width="1"/><line x1="1108.2" y1="774.5" x2="1119.7" y2="774.5" stroke="#333" stroke-width="1"/><path d="M1109.2 775.3 L1113.2 789.3 M1114.7 775.3 L1118.7 789.3" fill="none" stroke="#f0f0f0" stroke-width="0.8"/><line x1="1108.2" y1="790.5" x2="1119.7" y2="790.5" stroke="#333" stroke-width="1"/><path d="M1109.2 791.3 L1113.2 805.3 M1114.7 791.3 L1118.7 805.3" fill="none" stroke="#f0f0f0" stroke-width="0.8"/><line x1="1108.2" y1="806.5" x2="1119.7" y2="806.5" stroke="#333" stroke-width="1"/><path d="M1109.2 807.4 L1113.2 821.4 M1114.7 807.4 L1118.7 821.4" fill="none" stroke="#f0f0f0" stroke-width="0.8"/><line x1="1108.2" y1="822.5" x2="1119.7" y2="822.5" stroke="#333" stroke-width="1"/><path d="M1109.2 823.4 L1113.2 837.4 M1114.7 823.4 L1118.7 837.4" fill="none" stroke="#f0f0f0" stroke-width="0.8"/><rect x="1132.2" y="774.3" width="11.50" height="64.20" fill="#a8a8a8" stroke="#333" stroke-width="1" /><line x1="1137.5" y1="774.3" x2="1137.5" y2="838.5" stroke="#333" stroke-width="1"/><line x1="1132.2" y1="774.5" x2="1143.7" y2="774.5" stroke="#333" stroke-width="1"/><path d="M1133.2 775.3 L1137.2 789.3 M1138.7 775.3 L1142.7 789.3" fill="none" stroke="#f0f0f0" stroke-width="0.8"/><line x1="1132.2" y1="790.5" x2="1143.7" y2="790.5" stroke="#333" stroke-width="1"/><path d="M1133.2 791.3 L1137.2 805.3 M1138.7 791.3 L1142.7 805.3" fill="none" stroke="#f0f0f0" stroke-width="0.8"/><line x1="1132.2" y1="806.5" x2="1143.7" y2="806.5" stroke="#333" stroke-width="1"/><path d="M1133.2 807.4 L1137.2 821.4 M1138.7 807.4 L1142.7 821.4" fill="none" stroke="#f0f0f0" stroke-width="0.8"/><line x1="1132.2" y1="822.5" x2="1143.7" y2="822.5" stroke="#333" stroke-width="1"/><path d="M1133.2 823.4 L1137.2 837.4 M1138.7 823.4 L1142.7 837.4" fill="none" stroke="#f0f0f0" stroke-width="0.8"/><line x1="1070.4" y1="835.5" x2="1083.3" y2="835.5" stroke="#333" stroke-width="1"/><line x1="1094.8" y1="835.5" x2="1108.2" y2="835.5" stroke="#333" stroke-width="1"/><line x1="1119.7" y1="835.5" x2="1132.2" y2="835.5" stroke="#333" stroke-width="1"/><line x1="1087.5" y1="764.6" x2="1087.5" y2="774.3" stroke="#333" stroke-width="1"/><line x1="1037" y1="861" x2="1167" y2="861" stroke="#1010e0" stroke-width="2"/><path d="M1048 882.3 H1065.9 V860.6" fill="none" stroke="#1010e0" stroke-width="2.4"/><path d="M1150 882.3 H1138.1 V860.6" fill="none" stroke="#1010e0" stroke-width="2.4"/><line x1="1069" y1="862" x2="1082" y2="862" stroke="#111" stroke-width="2"/><line x1="1126" y1="862" x2="1136" y2="862" stroke="#111" stroke-width="2"/><rect x="1050" y="855" width="18.00" height="5.60" fill="#a6a6a6" stroke="#333" stroke-width="0.9" /><path d="M1050.8 859.8 L1067.2 855.8" fill="none" stroke="#f4f4f4" stroke-width="1.1"/><rect x="1085" y="855" width="33.00" height="5.60" fill="#a6a6a6" stroke="#333" stroke-width="0.9" /><path d="M1085.8 859.8 L1100.7 855.8" fill="none" stroke="#f4f4f4" stroke-width="1.1"/><path d="M1102.3 859.8 L1117.2 855.8" fill="none" stroke="#f4f4f4" stroke-width="1.1"/><line x1="1101.5" y1="855" x2="1101.5" y2="860.6" stroke="#333" stroke-width="1"/><rect x="1137" y="855" width="15.00" height="5.60" fill="#a6a6a6" stroke="#333" stroke-width="0.9" /><path d="M1137.8 859.8 L1151.2 855.8" fill="none" stroke="#f4f4f4" stroke-width="1.1"/><rect x="1069" y="861" width="13.00" height="5.00" fill="none" stroke="#333" stroke-width="0.8" /><rect x="1126" y="861" width="10.00" height="5.00" fill="none" stroke="#333" stroke-width="0.8" /><line x1="1085" y1="866.5" x2="1118" y2="866.5" stroke="#333" stroke-width="1"/><rect x="1084.9" y="877.2" width="33.40" height="15.10" fill="none" stroke="#333" stroke-width="0.9" /><line x1="1084.9" y1="886" x2="1118.3" y2="886" stroke="#111" stroke-width="2"/><circle cx="1090" cy="882" r="2.5" fill="none" stroke="#111" stroke-width="1.2"/><rect x="1047" y="880" width="13.00" height="11.00" fill="none" stroke="#333" stroke-width="0.8" /><rect x="1143" y="880" width="12.00" height="11.00" fill="none" stroke="#333" stroke-width="0.8" /><line x1="1049" y1="870.5" x2="1059" y2="870.5" stroke="#333" stroke-width="1"/><line x1="1052.5" y1="863" x2="1052.5" y2="880" stroke="#333" stroke-width="1"/><line x1="1153.5" y1="863" x2="1153.5" y2="880" stroke="#333" stroke-width="1"/><path d="M1160.7 854.4 V767.3 H1143.6 V838.5 H1118.7 V899.5 H1139 V906 H1142.2 V1040" fill="none" stroke="#e0406a" stroke-width="1"/><path d="M1136.6 1040 V854.4 H1160.7" fill="none" stroke="#e0406a" stroke-width="1"/><line x1="1144" y1="803.5" x2="1160" y2="803.5" stroke="#e0406a" stroke-width="1"/><line x1="1159.5" y1="895" x2="1159.5" y2="1040" stroke="#e0406a" stroke-width="1"/><path d="M1156 768 V782.6 M1160 768 Q1182 770 1182 782.6 H1160" fill="none" stroke="#333" stroke-width="0.9"/><line x1="1156" y1="783" x2="1212.7" y2="783" stroke="#111" stroke-width="2"/><line x1="1162" y1="785" x2="1162" y2="795" stroke="#111" stroke-width="2"/><line x1="1048.5" y1="895" x2="1048.5" y2="1025" stroke="#333" stroke-width="1"/><line x1="1155.5" y1="895" x2="1155.5" y2="1025" stroke="#333" stroke-width="1"/><rect x="1037.8" y="897.3" width="4.60" height="16.40" fill="#e6d6c0" stroke="#2020c0" stroke-width="0.9" /><line x1="1040.5" y1="899.0" x2="1040.5" y2="912.0" stroke="#666" stroke-width="1"/><rect x="1037.8" y="914.3" width="4.60" height="16.40" fill="#e6d6c0" stroke="#2020c0" stroke-width="0.9" /><line x1="1040.5" y1="916.0" x2="1040.5" y2="929.0" stroke="#666" stroke-width="1"/><rect x="1037.8" y="931.3" width="4.60" height="16.40" fill="#e6d6c0" stroke="#2020c0" stroke-width="0.9" /><line x1="1040.5" y1="933.0" x2="1040.5" y2="946.0" stroke="#666" stroke-width="1"/><rect x="1037.8" y="959.3" width="4.60" height="16.40" fill="#e6d6c0" stroke="#2020c0" stroke-width="0.9" /><line x1="1040.5" y1="961.0" x2="1040.5" y2="974.0" stroke="#666" stroke-width="1"/><rect x="1037.8" y="976.3" width="4.60" height="16.40" fill="#e6d6c0" stroke="#2020c0" stroke-width="0.9" /><line x1="1040.5" y1="978.0" x2="1040.5" y2="991.0" stroke="#666" stroke-width="1"/><rect x="1037.8" y="993.3" width="4.60" height="16.40" fill="#e6d6c0" stroke="#2020c0" stroke-width="0.9" /><line x1="1040.5" y1="995.0" x2="1040.5" y2="1008.0" stroke="#666" stroke-width="1"/><rect x="1161.2" y="897.3" width="4.60" height="16.40" fill="#e6d6c0" stroke="#2020c0" stroke-width="0.9" /><line x1="1163.5" y1="899.0" x2="1163.5" y2="912.0" stroke="#666" stroke-width="1"/><rect x="1161.2" y="914.3" width="4.60" height="16.40" fill="#e6d6c0" stroke="#2020c0" stroke-width="0.9" /><line x1="1163.5" y1="916.0" x2="1163.5" y2="929.0" stroke="#666" stroke-width="1"/><rect x="1161.2" y="931.3" width="4.60" height="16.40" fill="#e6d6c0" stroke="#2020c0" stroke-width="0.9" /><line x1="1163.5" y1="933.0" x2="1163.5" y2="946.0" stroke="#666" stroke-width="1"/><rect x="1161.2" y="959.3" width="4.60" height="16.40" fill="#e6d6c0" stroke="#2020c0" stroke-width="0.9" /><line x1="1163.5" y1="961.0" x2="1163.5" y2="974.0" stroke="#666" stroke-width="1"/><rect x="1161.2" y="976.3" width="4.60" height="16.40" fill="#e6d6c0" stroke="#2020c0" stroke-width="0.9" /><line x1="1163.5" y1="978.0" x2="1163.5" y2="991.0" stroke="#666" stroke-width="1"/><rect x="1161.2" y="993.3" width="4.60" height="16.40" fill="#e6d6c0" stroke="#2020c0" stroke-width="0.9" /><line x1="1163.5" y1="995.0" x2="1163.5" y2="1008.0" stroke="#666" stroke-width="1"/><line x1="1046" y1="897.5" x2="1050" y2="897.5" stroke="#333" stroke-width="1"/><line x1="1153" y1="897.5" x2="1157" y2="897.5" stroke="#333" stroke-width="1"/><line x1="1046" y1="910.5" x2="1050" y2="910.5" stroke="#333" stroke-width="1"/><line x1="1153" y1="910.5" x2="1157" y2="910.5" stroke="#333" stroke-width="1"/><line x1="1046" y1="923.5" x2="1050" y2="923.5" stroke="#333" stroke-width="1"/><line x1="1153" y1="923.5" x2="1157" y2="923.5" stroke="#333" stroke-width="1"/><line x1="1046" y1="936.5" x2="1050" y2="936.5" stroke="#333" stroke-width="1"/><line x1="1153" y1="936.5" x2="1157" y2="936.5" stroke="#333" stroke-width="1"/><line x1="1046" y1="949.5" x2="1050" y2="949.5" stroke="#333" stroke-width="1"/><line x1="1153" y1="949.5" x2="1157" y2="949.5" stroke="#333" stroke-width="1"/><line x1="1046" y1="962.5" x2="1050" y2="962.5" stroke="#333" stroke-width="1"/><line x1="1153" y1="962.5" x2="1157" y2="962.5" stroke="#333" stroke-width="1"/><line x1="1046" y1="975.5" x2="1050" y2="975.5" stroke="#333" stroke-width="1"/><line x1="1153" y1="975.5" x2="1157" y2="975.5" stroke="#333" stroke-width="1"/><line x1="1046" y1="988.5" x2="1050" y2="988.5" stroke="#333" stroke-width="1"/><line x1="1153" y1="988.5" x2="1157" y2="988.5" stroke="#333" stroke-width="1"/><line x1="1046" y1="1001.5" x2="1050" y2="1001.5" stroke="#333" stroke-width="1"/><line x1="1153" y1="1001.5" x2="1157" y2="1001.5" stroke="#333" stroke-width="1"/><line x1="1043" y1="989.5" x2="1155" y2="989.5" stroke="#333" stroke-width="1"/><line x1="1072.5" y1="949.6" x2="1072.5" y2="971" stroke="#333" stroke-width="1"/><line x1="1072.5" y1="1005.4" x2="1072.5" y2="1026.8" stroke="#333" stroke-width="1"/><rect x="1064.8" y="915.4" width="10.40" height="34.20" fill="#e8cdb8" stroke="#e0103c" stroke-width="1.8" /><line x1="1064.8" y1="932" x2="1075.2" y2="932" stroke="#e0103c" stroke-width="2"/><line x1="1072.5" y1="917.4" x2="1072.5" y2="947.6" stroke="#555" stroke-width="1"/><rect x="1064.8" y="971" width="10.40" height="34.40" fill="#e8cdb8" stroke="#e0103c" stroke-width="1.8" /><line x1="1064.8" y1="988" x2="1075.2" y2="988" stroke="#e0103c" stroke-width="2"/><line x1="1072.5" y1="973" x2="1072.5" y2="1003.4" stroke="#555" stroke-width="1"/><rect x="1096.3999999999999" y="915.4" width="10.40" height="34.20" fill="#e8cdb8" stroke="#e0103c" stroke-width="1.8" /><line x1="1096.3999999999999" y1="932" x2="1106.8" y2="932" stroke="#e0103c" stroke-width="2"/><line x1="1104.5" y1="917.4" x2="1104.5" y2="947.6" stroke="#555" stroke-width="1"/><rect x="1096.3999999999999" y="971" width="10.40" height="34.40" fill="#e8cdb8" stroke="#e0103c" stroke-width="1.8" /><line x1="1096.3999999999999" y1="988" x2="1106.8" y2="988" stroke="#e0103c" stroke-width="2"/><line x1="1104.5" y1="973" x2="1104.5" y2="1003.4" stroke="#555" stroke-width="1"/><rect x="1127.8" y="915.4" width="10.40" height="34.20" fill="#e8cdb8" stroke="#e0103c" stroke-width="1.8" /><line x1="1127.8" y1="932" x2="1138.2" y2="932" stroke="#e0103c" stroke-width="2"/><line x1="1135.5" y1="917.4" x2="1135.5" y2="947.6" stroke="#555" stroke-width="1"/><rect x="1127.8" y="971" width="10.40" height="34.40" fill="#e8cdb8" stroke="#e0103c" stroke-width="1.8" /><line x1="1127.8" y1="988" x2="1138.2" y2="988" stroke="#e0103c" stroke-width="2"/><line x1="1135.5" y1="973" x2="1135.5" y2="1003.4" stroke="#555" stroke-width="1"/><rect x="1072.1" y="1026.8" width="15.90" height="12.00" fill="#e8cdb8" stroke="#e0103c" stroke-width="1.8" /><line x1="1072.1" y1="1032.5" x2="1088" y2="1032.5" stroke="#e0406a" stroke-width="1"/><rect x="1115.1" y="1026.8" width="15.90" height="12.00" fill="#e8cdb8" stroke="#e0103c" stroke-width="1.8" /><line x1="1115.1" y1="1032.5" x2="1131" y2="1032.5" stroke="#e0406a" stroke-width="1"/><line x1="1088" y1="1032.5" x2="1115" y2="1032.5" stroke="#333" stroke-width="1"/><path d="M1065 1027 H1070 M1067.5 1027 V1039 M1065 1039 H1070" fill="none" stroke="#e0406a" stroke-width="1.2"/><path d="M1133 1027 H1138 M1135.5 1027 V1039 M1133 1039 H1138" fill="none" stroke="#e0406a" stroke-width="1.2"/><circle cx="1041" cy="1034" r="3" fill="none" stroke="#333" stroke-width="0.9"/><circle cx="1167.7" cy="1034" r="3" fill="none" stroke="#333" stroke-width="0.9"/><rect x="1045" y="1015" width="10.00" height="11.00" fill="none" stroke="#333" stroke-width="0.8" /><line x1="1143" y1="1028.5" x2="1160" y2="1028.5" stroke="#e0406a" stroke-width="1"/><path d="M1222.5 1148 H1242.5 V1179 M1222.5 1148 V1173 H1228" fill="none" stroke="#1010e0" stroke-width="2.4"/><line x1="1228.5" y1="1149" x2="1228.5" y2="1174" stroke="#333" stroke-width="1"/><line x1="1223" y1="1168.5" x2="1242" y2="1168.5" stroke="#333" stroke-width="1"/><rect x="1227" y="1172" width="13.00" height="3.00" fill="#fff" stroke="#111" stroke-width="1.2" /><rect x="1221.5" y="1175.5" width="19.00" height="5.50" fill="#c8a070" stroke="#6a4a20" stroke-width="0.8" /><circle cx="1233" cy="1151.5" r="1.3" fill="none" stroke="#333" stroke-width="0.8"/><ellipse cx="1264" cy="1154.5" rx="2.6" ry="4" fill="none" stroke="#444" stroke-width="0.9"/><rect x="1273.4" y="1135.6" width="5.60" height="17.20" fill="#e2d6c6" stroke="#4040c0" stroke-width="1.2" /><rect x="1301.8" y="1153.5" width="9.70" height="17.00" fill="#e8d0c0" stroke="#e01040" stroke-width="2" /><path d="M514.4 692 V681 H525.4 M544.5 681 H555.5 V692 M555.5 710.6 V721.6 H544.5 M525.4 721.6 H514.4 V710.6" fill="none" stroke="#e2e2e2" stroke-width="1.3"/><rect x="527.2" y="693.3" width="16.30" height="16.30" fill="none" stroke="#e0e0e0" stroke-width="1.3" /></svg>
<div style="position:absolute;left:1819px;top:75px;width:229px;height:1183px;background:#f0f0f0"></div>
<div style="position:absolute;left:1823.4px;top:168px;width:1px;height:1064px;background:#d4d4d4"></div>
<div style="position:absolute;left:1825px;top:168px;width:1.6px;height:1064px;background:#a9a9a9"></div>
<div style="position:absolute;left:1824px;top:76px;width:222px;height:24px;background:#f0f0f0;border:1px solid #d2d2d2"></div>
<svg class="st" style="left:1827px;top:71.2px" width="138" height="34"><text x="0" y="22.89" font-size="17" font-weight="400" fill="#111" stroke="#111" stroke-width="0.3" textLength="134" lengthAdjust="spacingAndGlyphs">オブジェクト情報 ...</text></svg>
<svg style="left:1972px;top:80px;" width="18" height="16" viewBox="0 0 18 16"><rect x="1" y="2" width="15" height="2.4" fill="#111"/><rect x="1" y="7" width="15" height="2.4" fill="#111"/><rect x="1" y="12" width="15" height="2.4" fill="#111"/></svg>
<svg class="st" style="left:2001.5px;top:70.5px" width="14" height="36"><text x="0" y="24.24" font-size="18" font-weight="700" fill="#111" stroke="#111" stroke-width="0.3" textLength="10" lengthAdjust="spacingAndGlyphs">?</text></svg>
<svg style="left:2026px;top:81px;" width="16" height="16" viewBox="0 0 16 16"><path d="M2 2 L13 13 M13 2 L2 13" stroke="#111" stroke-width="2.4"/></svg>
<div style="position:absolute;left:1825px;top:103px;width:55px;height:28px;background:#f7f7f7"></div>
<div style="position:absolute;left:1880.6px;top:104px;width:1px;height:27px;background:#8a8a8a"></div>
<div style="position:absolute;left:1939.5px;top:104px;width:1px;height:27px;background:#cfcfcf"></div>
<div style="position:absolute;left:1998px;top:104px;width:1px;height:27px;background:#cfcfcf"></div>
<svg class="st" style="left:1835.7px;top:100.5px" width="38" height="34"><text x="0" y="22.89" font-size="17" font-weight="400" fill="#111" stroke="#111" stroke-width="0.3" textLength="34.3" lengthAdjust="spacingAndGlyphs">形状</text></svg>
<svg class="st" style="left:1889.8px;top:100.5px" width="46" height="34"><text x="0" y="22.89" font-size="17" font-weight="400" fill="#111" stroke="#111" stroke-width="0.3" textLength="42.3" lengthAdjust="spacingAndGlyphs">データ</text></svg>
<svg class="st" style="left:1949.2px;top:100.5px" width="46" height="34"><text x="0" y="22.89" font-size="17" font-weight="400" fill="#111" stroke="#111" stroke-width="0.3" textLength="42.3" lengthAdjust="spacingAndGlyphs">レン...</text></svg>
<div style="position:absolute;left:1826px;top:135.7px;width:220px;height:29.5px;background:#f0f0f0;border:1px solid #c4c4c4"></div>
<svg class="st" style="left:1830.4px;top:133.5px" width="91" height="34"><text x="0" y="22.89" font-size="17" font-weight="700" fill="#111" stroke="#111" stroke-width="0.3" textLength="87.1" lengthAdjust="spacingAndGlyphs">ビューポート</text></svg>
<div style="position:absolute;left:1826px;top:168px;width:220px;height:1064px;border-top:1px solid #c4c4c4;border-right:1px solid #e0e0e0"></div>
<svg class="st" style="left:1833px;top:165.0px" width="46" height="34"><text x="0" y="22.89" font-size="17" font-weight="400" fill="#111" stroke="#111" stroke-width="0.3" textLength="42.3" lengthAdjust="spacingAndGlyphs">クラス:</text></svg>
<div style="position:absolute;left:1883px;top:170.4px;width:160px;height:23.599999999999994px;background:#fff;border:1px solid #c8c8c8"></div>
<div style="position:absolute;left:2014px;top:171.4px;width:28px;height:21.599999999999994px;background:#f0f0f0"></div>
<svg style="left:2023.5px;top:179.2px;" width="10" height="6" viewBox="0 0 10 6"><path d="M0.5 0.5 H9.5 L5 5.5 Z" fill="#111"/></svg>
<svg class="st" style="left:1889.8px;top:165.2px" width="38" height="34"><text x="0" y="22.89" font-size="17" font-weight="400" fill="#111" stroke="#111" stroke-width="0.3" textLength="34.3" lengthAdjust="spacingAndGlyphs">一般</text></svg>
<svg class="st" style="left:1834.3px;top:190.0px" width="46" height="34"><text x="0" y="22.89" font-size="17" font-weight="400" fill="#111" stroke="#111" stroke-width="0.3" textLength="42.3" lengthAdjust="spacingAndGlyphs">レイヤ:</text></svg>
<div style="position:absolute;left:1885.8px;top:195.5px;width:157.20000000000005px;height:23.5px;background:#fff;border:1px solid #c8c8c8"></div>
<div style="position:absolute;left:2014px;top:196.5px;width:28px;height:21.5px;background:#f0f0f0"></div>
<svg style="left:2023.5px;top:204.25px;" width="10" height="6" viewBox="0 0 10 6"><path d="M0.5 0.5 H9.5 L5 5.5 Z" fill="#111"/></svg>
<svg class="st" style="left:1891.1px;top:190.2px" width="119" height="34"><text x="0" y="22.89" font-size="17" font-weight="400" fill="#111" stroke="#111" stroke-width="0.3" textLength="114.9" lengthAdjust="spacingAndGlyphs">Sht-1 [平面図]</text></svg>
<div style="position:absolute;left:1826.6px;top:220px;width:219px;height:1px;background:#d0d0d0"></div>
<svg style="left:0px;top:0px;" width="2048" height="1287" viewBox="0 0 2048 1287"><rect x="1849" y="231" width="64.6" height="101.8" fill="none" stroke="#555" stroke-width="1.2"/><circle cx="1848.9" cy="231" r="4.6" fill="#fff" stroke="#555" stroke-width="1.1"/><circle cx="1848.9" cy="281.3" r="4.6" fill="#fff" stroke="#555" stroke-width="1.1"/><circle cx="1848.9" cy="332.8" r="4.6" fill="#fff" stroke="#555" stroke-width="1.1"/><circle cx="1881.9" cy="231" r="4.6" fill="#fff" stroke="#555" stroke-width="1.1"/><circle cx="1881.9" cy="281.3" r="4.6" fill="#fff" stroke="#555" stroke-width="1.1"/><circle cx="1881.9" cy="332.8" r="4.6" fill="#fff" stroke="#555" stroke-width="1.1"/><circle cx="1913.6" cy="231" r="4.6" fill="#fff" stroke="#555" stroke-width="1.1"/><circle cx="1913.6" cy="281.3" r="4.6" fill="#fff" stroke="#555" stroke-width="1.1"/><circle cx="1913.6" cy="332.8" r="4.6" fill="#fff" stroke="#555" stroke-width="1.1"/><circle cx="1848.9" cy="231" r="2.2" fill="#111"/></svg>
<svg class="st" style="left:1948px;top:216.0px" width="33" height="34"><text x="0" y="22.89" font-size="17" font-weight="400" fill="#111" stroke="#111" stroke-width="0.3" textLength="29" lengthAdjust="spacingAndGlyphs">ΔX:</text></svg>
<svg class="st" style="left:1948px;top:241.0px" width="33" height="34"><text x="0" y="22.89" font-size="17" font-weight="400" fill="#111" stroke="#111" stroke-width="0.3" textLength="29" lengthAdjust="spacingAndGlyphs">ΔY:</text></svg>
<svg class="st" style="left:1946.6px;top:266.0px" width="17" height="34"><text x="0" y="22.89" font-size="17" font-weight="400" fill="#111" stroke="#111" stroke-width="0.3" textLength="13.2" lengthAdjust="spacingAndGlyphs">X:</text></svg>
<svg class="st" style="left:1946.6px;top:291.0px" width="17" height="34"><text x="0" y="22.89" font-size="17" font-weight="400" fill="#111" stroke="#111" stroke-width="0.3" textLength="13.2" lengthAdjust="spacingAndGlyphs">Y:</text></svg>
<div style="position:absolute;left:1996.8px;top:221.9px;width:46.200000000000045px;height:22.400000000000006px;background:#fff;border:1px solid #c8c8c8"></div>
<svg class="st" style="left:2002px;top:216.1px" width="33" height="34"><text x="0" y="22.89" font-size="17" font-weight="400" fill="#111" stroke="#111" stroke-width="0.3" textLength="29" lengthAdjust="spacingAndGlyphs">49...</text></svg>
<div style="position:absolute;left:1996.8px;top:247px;width:46.200000000000045px;height:22.399999999999977px;background:#fff;border:1px solid #c8c8c8"></div>
<svg class="st" style="left:2002px;top:241.2px" width="33" height="34"><text x="0" y="22.89" font-size="17" font-weight="400" fill="#111" stroke="#111" stroke-width="0.3" textLength="29" lengthAdjust="spacingAndGlyphs">63...</text></svg>
<div style="position:absolute;left:1996.8px;top:272px;width:46.200000000000045px;height:22.5px;background:#fff;border:1px solid #c8c8c8"></div>
<svg class="st" style="left:2002px;top:266.2px" width="33" height="34"><text x="0" y="22.89" font-size="17" font-weight="400" fill="#111" stroke="#111" stroke-width="0.3" textLength="29" lengthAdjust="spacingAndGlyphs">−2...</text></svg>
<div style="position:absolute;left:1996.8px;top:297px;width:46.200000000000045px;height:22.600000000000023px;background:#fff;border:1px solid #c8c8c8"></div>
<svg class="st" style="left:2002px;top:291.3px" width="33" height="34"><text x="0" y="22.89" font-size="17" font-weight="400" fill="#111" stroke="#111" stroke-width="0.3" textLength="29" lengthAdjust="spacingAndGlyphs">31...</text></svg>
<div style="position:absolute;left:1826.6px;top:345.5px;width:219px;height:1px;background:#d0d0d0"></div>
<svg class="st" style="left:1834.4px;top:344.6px" width="41" height="34"><text x="0" y="22.89" font-size="17" font-weight="400" fill="#111" stroke="#111" stroke-width="0.3" textLength="37.4" lengthAdjust="spacingAndGlyphs">角度:</text></svg>
<div style="position:absolute;left:1936.5px;top:348.7px;width:106.90000000000009px;height:23.0px;background:#fff;border:1px solid #c8c8c8"></div>
<svg class="st" style="left:1942.2px;top:343.2px" width="41" height="34"><text x="0" y="22.89" font-size="17" font-weight="400" fill="#111" stroke="#111" stroke-width="0.3" textLength="37.4" lengthAdjust="spacingAndGlyphs">0.00°</text></svg>
<svg class="st" style="left:1834.4px;top:369.0px" width="56" height="34"><text x="0" y="22.89" font-size="17" font-weight="400" fill="#111" stroke="#111" stroke-width="0.3" textLength="51.8" lengthAdjust="spacingAndGlyphs">クロップ:</text></svg>
<svg class="st" style="left:1943.7px;top:369.0px" width="30" height="34"><text x="0" y="22.89" font-size="17" font-weight="400" fill="#111" stroke="#111" stroke-width="0.3" textLength="25.9" lengthAdjust="spacingAndGlyphs">なし</text></svg>
<div style="position:absolute;left:1830px;top:401.9px;width:19px;height:18.600000000000023px;background:#f6f6f6;border:1px solid #d8d8d8;border-radius:3px"></div>
<svg class="st" style="left:1858.9px;top:394.2px" width="69" height="34"><text x="0" y="22.89" font-size="17" font-weight="400" fill="#8a8a8a" stroke="#8a8a8a" stroke-width="0.3" textLength="64.7" lengthAdjust="spacingAndGlyphs">枠を表示</text></svg>
<div style="position:absolute;left:1828.7px;top:424.9px;width:214.1px;height:23.0px;background:#fbfbfb;border:1px solid #e2e2e2;border-radius:2px"></div>
<svg class="st" style="left:1919.2px;top:419.4px" width="37" height="34"><text x="0" y="22.89" font-size="17" font-weight="400" fill="#111" stroke="#111" stroke-width="0.3" textLength="33" lengthAdjust="spacingAndGlyphs">更新</text></svg>
<svg class="st" style="left:1834.4px;top:446.7px" width="94" height="34"><text x="0" y="22.89" font-size="17" font-weight="400" fill="#111" stroke="#111" stroke-width="0.3" textLength="90.5" lengthAdjust="spacingAndGlyphs">図面タイトル:</text></svg>
<div style="position:absolute;left:1936.5px;top:450.7px;width:106.90000000000009px;height:23.0px;background:#fff;border:1px solid #c8c8c8"></div>
<svg class="st" style="left:1942.2px;top:445.2px" width="95" height="34"><text x="0" y="22.89" font-size="17" font-weight="400" fill="#111" stroke="#111" stroke-width="0.3" textLength="91.4" lengthAdjust="spacingAndGlyphs">[図面タイト...</text></svg>
<svg class="st" style="left:1834.4px;top:471.0px" width="41" height="34"><text x="0" y="22.89" font-size="17" font-weight="400" fill="#111" stroke="#111" stroke-width="0.3" textLength="37.4" lengthAdjust="spacingAndGlyphs">図番:</text></svg>
<div style="position:absolute;left:1936.5px;top:476px;width:106.90000000000009px;height:23px;background:#fff;border:1px solid #c8c8c8"></div>
<svg class="st" style="left:1944.5px;top:470.5px" width="11" height="34"><text x="0" y="22.89" font-size="17" font-weight="400" fill="#111" stroke="#111" stroke-width="0.3" textLength="7" lengthAdjust="spacingAndGlyphs">1</text></svg>
<svg class="st" style="left:1834.4px;top:497.0px" width="97" height="34"><text x="0" y="22.89" font-size="17" font-weight="400" fill="#111" stroke="#111" stroke-width="0.3" textLength="93.4" lengthAdjust="spacingAndGlyphs">逆参照シー...</text></svg>
<div style="position:absolute;left:1828.7px;top:526.9px;width:214.1px;height:23.0px;background:#fbfbfb;border:1px solid #e2e2e2;border-radius:2px"></div>
<svg class="st" style="left:1910.6px;top:521.4px" width="54" height="34"><text x="0" y="22.89" font-size="17" font-weight="400" fill="#111" stroke="#111" stroke-width="0.3" textLength="50.3" lengthAdjust="spacingAndGlyphs">レイヤ...</text></svg>
<div style="position:absolute;left:1828.7px;top:552.8px;width:214.1px;height:23.0px;background:#fbfbfb;border:1px solid #e2e2e2;border-radius:2px"></div>
<svg class="st" style="left:1910.6px;top:547.3px" width="53" height="34"><text x="0" y="22.89" font-size="17" font-weight="400" fill="#111" stroke="#111" stroke-width="0.3" textLength="48.9" lengthAdjust="spacingAndGlyphs">クラス...</text></svg>
<svg class="st" style="left:1834.4px;top:572.4px" width="41" height="34"><text x="0" y="22.89" font-size="17" font-weight="400" fill="#111" stroke="#111" stroke-width="0.3" textLength="37.4" lengthAdjust="spacingAndGlyphs">縮尺:</text></svg>
<div style="position:absolute;left:1936.5px;top:577.2px;width:106.90000000000009px;height:24.399999999999977px;background:#fff;border:1px solid #c8c8c8"></div>
<div style="position:absolute;left:2014px;top:578.2px;width:28.40000000000009px;height:22.399999999999977px;background:#f0f0f0"></div>
<svg style="left:2023.5px;top:586.4000000000001px;" width="10" height="6" viewBox="0 0 10 6"><path d="M0.5 0.5 H9.5 L5 5.5 Z" fill="#111"/></svg>
<svg class="st" style="left:1942.2px;top:572.4px" width="44" height="34"><text x="0" y="22.89" font-size="17" font-weight="400" fill="#111" stroke="#111" stroke-width="0.3" textLength="39.7" lengthAdjust="spacingAndGlyphs">1:100</text></svg>
<svg class="st" style="left:1834.4px;top:598.0px" width="74" height="34"><text x="0" y="22.89" font-size="17" font-weight="400" fill="#8a8a8a" stroke="#8a8a8a" stroke-width="0.3" textLength="70.4" lengthAdjust="spacingAndGlyphs">カスタム 1:</text></svg>
<svg class="st" style="left:1943.7px;top:598.0px" width="60" height="34"><text x="0" y="22.89" font-size="17" font-weight="400" fill="#8a8a8a" stroke="#8a8a8a" stroke-width="0.3" textLength="56" lengthAdjust="spacingAndGlyphs">100.000</text></svg>
<svg class="st" style="left:1834.4px;top:623.0px" width="86" height="34"><text x="0" y="22.89" font-size="17" font-weight="400" fill="#111" stroke="#111" stroke-width="0.3" textLength="82" lengthAdjust="spacingAndGlyphs">詳細レベル:</text></svg>
<div style="position:absolute;left:1936.5px;top:628.4px;width:106.90000000000009px;height:23.600000000000023px;background:#fff;border:1px solid #c8c8c8"></div>
<div style="position:absolute;left:2014px;top:629.4px;width:28.40000000000009px;height:21.600000000000023px;background:#f0f0f0"></div>
<svg style="left:2023.5px;top:637.2px;" width="10" height="6" viewBox="0 0 10 6"><path d="M0.5 0.5 H9.5 L5 5.5 Z" fill="#111"/></svg>
<svg class="st" style="left:1943.7px;top:623.2px" width="18" height="34"><text x="0" y="22.89" font-size="17" font-weight="400" fill="#111" stroke="#111" stroke-width="0.3" textLength="14.3" lengthAdjust="spacingAndGlyphs">中</text></svg>
<div style="position:absolute;left:1830px;top:656.2px;width:19px;height:18.799999999999955px;background:#1f6fd0;border-radius:3px"></div>
<svg style="left:1830px;top:656.2px;" width="19" height="18.799999999999955" viewBox="0 0 19 18.799999999999955"><path d="M5 9.5 L8.3 12.8 L14.5 6.5" fill="none" stroke="#fff" stroke-width="1.5"/></svg>
<svg class="st" style="left:1858.9px;top:648.6px" width="182" height="34"><text x="0" y="22.89" font-size="17" font-weight="400" fill="#111" stroke="#111" stroke-width="0.3" textLength="178" lengthAdjust="spacingAndGlyphs">プレイナー（アクティブレイ...</text></svg>
<div style="position:absolute;left:1830px;top:682px;width:19px;height:18.5px;background:#1f6fd0;border-radius:3px"></div>
<svg style="left:1830px;top:682px;" width="19" height="18.5" viewBox="0 0 19 18.5"><path d="M5 9.5 L8.3 12.8 L14.5 6.5" fill="none" stroke="#fff" stroke-width="1.5"/></svg>
<svg class="st" style="left:1858.9px;top:674.2px" width="182" height="34"><text x="0" y="22.89" font-size="17" font-weight="400" fill="#111" stroke="#111" stroke-width="0.3" textLength="178" lengthAdjust="spacingAndGlyphs">スクリーン（スクリーンプレ...</text></svg>
<svg class="st" style="left:1834.4px;top:700.3px" width="46" height="34"><text x="0" y="22.89" font-size="17" font-weight="400" fill="#111" stroke="#111" stroke-width="0.3" textLength="41.7" lengthAdjust="spacingAndGlyphs">カメラ:</text></svg>
<svg class="st" style="left:1943.7px;top:700.3px" width="30" height="34"><text x="0" y="22.89" font-size="17" font-weight="400" fill="#111" stroke="#111" stroke-width="0.3" textLength="25.9" lengthAdjust="spacingAndGlyphs">なし</text></svg>
<svg class="st" style="left:1834.4px;top:725.8px" width="46" height="34"><text x="0" y="22.89" font-size="17" font-weight="400" fill="#111" stroke="#111" stroke-width="0.3" textLength="41.7" lengthAdjust="spacingAndGlyphs">ビュー:</text></svg>
<div style="position:absolute;left:1936.5px;top:731.7px;width:106.90000000000009px;height:22.09999999999991px;background:#fff;border:1px solid #c8c8c8"></div>
<div style="position:absolute;left:2014px;top:732.7px;width:28.40000000000009px;height:20.09999999999991px;background:#f0f0f0"></div>
<svg style="left:2023.5px;top:739.75px;" width="10" height="6" viewBox="0 0 10 6"><path d="M0.5 0.5 H9.5 L5 5.5 Z" fill="#111"/></svg>
<svg class="st" style="left:1943.7px;top:725.8px" width="62" height="34"><text x="0" y="22.89" font-size="17" font-weight="400" fill="#111" stroke="#111" stroke-width="0.3" textLength="57.5" lengthAdjust="spacingAndGlyphs">2D/平...</text></svg>
<div style="position:absolute;left:1828.7px;top:756px;width:214.1px;height:21.700000000000045px;background:#fbfbfb;border:1px solid #e2e2e2;border-radius:2px"></div>
<svg class="st" style="left:1871.8px;top:749.9px" width="130" height="34"><text x="0" y="22.89" font-size="17" font-weight="400" fill="#9a9a9a" stroke="#9a9a9a" stroke-width="0.3" textLength="126.5" lengthAdjust="spacingAndGlyphs">見る角度を指定...</text></svg>
<svg class="st" style="left:1834.4px;top:776.2px" width="90" height="34"><text x="0" y="22.89" font-size="17" font-weight="400" fill="#111" stroke="#111" stroke-width="0.3" textLength="86.2" lengthAdjust="spacingAndGlyphs">レンダリング...</text></svg>
<div style="position:absolute;left:1936.5px;top:782px;width:106.90000000000009px;height:22.399999999999977px;background:#fff;border:1px solid #c8c8c8"></div>
<div style="position:absolute;left:2014px;top:783px;width:28.40000000000009px;height:20.399999999999977px;background:#f0f0f0"></div>
<svg style="left:2023.5px;top:790.2px;" width="10" height="6" viewBox="0 0 10 6"><path d="M0.5 0.5 H9.5 L5 5.5 Z" fill="#111"/></svg>
<svg class="st" style="left:1943.7px;top:776.2px" width="54" height="34"><text x="0" y="22.89" font-size="17" font-weight="400" fill="#111" stroke="#111" stroke-width="0.3" textLength="50.3" lengthAdjust="spacingAndGlyphs">ワイヤ...</text></svg>
<div style="position:absolute;left:1828.7px;top:807.3px;width:214.1px;height:22.100000000000023px;background:#fbfbfb;border:1px solid #e2e2e2;border-radius:2px"></div>
<svg class="st" style="left:1831.6px;top:801.3px" width="214" height="34"><text x="0" y="22.89" font-size="17" font-weight="400" fill="#111" stroke="#111" stroke-width="0.3" textLength="209.8" lengthAdjust="spacingAndGlyphs">レンダリング設定（バックグラウ...</text></svg>
<svg class="st" style="left:1834.4px;top:827.1px" width="90" height="34"><text x="0" y="22.89" font-size="17" font-weight="400" fill="#111" stroke="#111" stroke-width="0.3" textLength="86.2" lengthAdjust="spacingAndGlyphs">レンダリング...</text></svg>
<div style="position:absolute;left:1936.5px;top:832.9px;width:106.90000000000009px;height:22.399999999999977px;background:#fff;border:1px solid #c8c8c8"></div>
<div style="position:absolute;left:2014px;top:833.9px;width:28.40000000000009px;height:20.399999999999977px;background:#f0f0f0"></div>
<svg style="left:2023.5px;top:841.0999999999999px;" width="10" height="6" viewBox="0 0 10 6"><path d="M0.5 0.5 H9.5 L5 5.5 Z" fill="#111"/></svg>
<svg class="st" style="left:1943.7px;top:827.1px" width="30" height="34"><text x="0" y="22.89" font-size="17" font-weight="400" fill="#111" stroke="#111" stroke-width="0.3" textLength="25.9" lengthAdjust="spacingAndGlyphs">なし</text></svg>
<div style="position:absolute;left:1828.7px;top:858px;width:214.1px;height:21.700000000000045px;background:#fbfbfb;border:1px solid #e2e2e2;border-radius:2px"></div>
<svg class="st" style="left:1847.4px;top:851.9px" width="181" height="34"><text x="0" y="22.89" font-size="17" font-weight="400" fill="#9a9a9a" stroke="#9a9a9a" stroke-width="0.3" textLength="176.8" lengthAdjust="spacingAndGlyphs">レンダリング設定（輪郭）...</text></svg>
<svg class="st" style="left:1834.4px;top:878.1px" width="93" height="34"><text x="0" y="22.89" font-size="17" font-weight="400" fill="#111" stroke="#111" stroke-width="0.3" textLength="89.1" lengthAdjust="spacingAndGlyphs">投影の方法:</text></svg>
<div style="position:absolute;left:1936.5px;top:884px;width:106.90000000000009px;height:22.200000000000045px;background:#fff;border:1px solid #c8c8c8"></div>
<div style="position:absolute;left:2014px;top:885px;width:28.40000000000009px;height:20.200000000000045px;background:#f0f0f0"></div>
<svg style="left:2023.5px;top:892.1px;" width="10" height="6" viewBox="0 0 10 6"><path d="M0.5 0.5 H9.5 L5 5.5 Z" fill="#111"/></svg>
<svg class="st" style="left:1943.7px;top:878.1px" width="59" height="34"><text x="0" y="22.89" font-size="17" font-weight="400" fill="#111" stroke="#111" stroke-width="0.3" textLength="54.6" lengthAdjust="spacingAndGlyphs">2D平面</text></svg>
<svg class="st" style="left:1834.4px;top:903.0px" width="86" height="34"><text x="0" y="22.89" font-size="17" font-weight="400" fill="#8a8a8a" stroke="#8a8a8a" stroke-width="0.3" textLength="82" lengthAdjust="spacingAndGlyphs">透視投影...</text></svg>
<div style="position:absolute;left:1936.5px;top:908.5px;width:106.90000000000009px;height:22.899999999999977px;background:#f0f0f0;border:1px solid #d4d4d4"></div>
<div style="position:absolute;left:2014px;top:909.5px;width:28.40000000000009px;height:20.899999999999977px;background:#f0f0f0"></div>
<svg style="left:2023.5px;top:916.95px;" width="10" height="6" viewBox="0 0 10 6"><path d="M0.5 0.5 H9.5 L5 5.5 Z" fill="#bbb"/></svg>
<svg class="st" style="left:1943.7px;top:903.0px" width="56" height="34"><text x="0" y="22.89" font-size="17" font-weight="400" fill="#9a9a9a" stroke="#9a9a9a" stroke-width="0.3" textLength="51.7" lengthAdjust="spacingAndGlyphs">カスタム</text></svg>
<svg class="st" style="left:1834.4px;top:928.8px" width="79" height="34"><text x="0" y="22.89" font-size="17" font-weight="400" fill="#8a8a8a" stroke="#8a8a8a" stroke-width="0.3" textLength="74.7" lengthAdjust="spacingAndGlyphs">投影距離:</text></svg>
<svg class="st" style="left:1943.7px;top:928.8px" width="43" height="34"><text x="0" y="22.89" font-size="17" font-weight="400" fill="#8a8a8a" stroke="#8a8a8a" stroke-width="0.3" textLength="38.8" lengthAdjust="spacingAndGlyphs">0.250</text></svg>
<div style="position:absolute;left:1828.7px;top:960.2px;width:214.1px;height:21.5px;background:#fbfbfb;border:1px solid #e2e2e2;border-radius:2px"></div>
<svg class="st" style="left:1886.2px;top:954.0px" width="104" height="34"><text x="0" y="22.89" font-size="17" font-weight="400" fill="#111" stroke="#111" stroke-width="0.3" textLength="99.7" lengthAdjust="spacingAndGlyphs">背景放射光...</text></svg>
<div style="position:absolute;left:1828.7px;top:984.6px;width:214.1px;height:23.0px;background:#fbfbfb;border:1px solid #e2e2e2;border-radius:2px"></div>
<svg class="st" style="left:1897.7px;top:979.1px" width="80" height="34"><text x="0" y="22.89" font-size="17" font-weight="400" fill="#111" stroke="#111" stroke-width="0.3" textLength="76.2" lengthAdjust="spacingAndGlyphs">プロパティ...</text></svg>
<div style="position:absolute;left:1830px;top:1013.4px;width:19px;height:18.600000000000023px;background:#f6f6f6;border:1px solid #d8d8d8;border-radius:3px"></div>
<svg class="st" style="left:1858.9px;top:1005.7px" width="169" height="34"><text x="0" y="22.89" font-size="17" font-weight="400" fill="#8a8a8a" stroke="#8a8a8a" stroke-width="0.3" textLength="165.3" lengthAdjust="spacingAndGlyphs">イメージエフェクトを適用</text></svg>
<div style="position:absolute;left:1828.7px;top:1036.4px;width:214.1px;height:22.09999999999991px;background:#fbfbfb;border:1px solid #e2e2e2;border-radius:2px"></div>
<svg class="st" style="left:1871.8px;top:1030.5px" width="132" height="34"><text x="0" y="22.89" font-size="17" font-weight="400" fill="#9a9a9a" stroke="#9a9a9a" stroke-width="0.3" textLength="127.9" lengthAdjust="spacingAndGlyphs">イメージエフェクト...</text></svg>
<div style="position:absolute;left:1826px;top:1231.5px;width:220px;height:1px;background:#d8d8d8"></div>
<svg class="st" style="left:1830.5px;top:1229.5px" width="42" height="34"><text x="0" y="22.89" font-size="17" font-weight="400" fill="#7a7a7a" stroke="#7a7a7a" stroke-width="0.3" textLength="38" lengthAdjust="spacingAndGlyphs">名前:</text></svg>
<div style="position:absolute;left:1876px;top:1236px;width:169px;height:20.6px;background:#f0f0f0;border:1px solid #9a9a9a"></div>
</body></html>
